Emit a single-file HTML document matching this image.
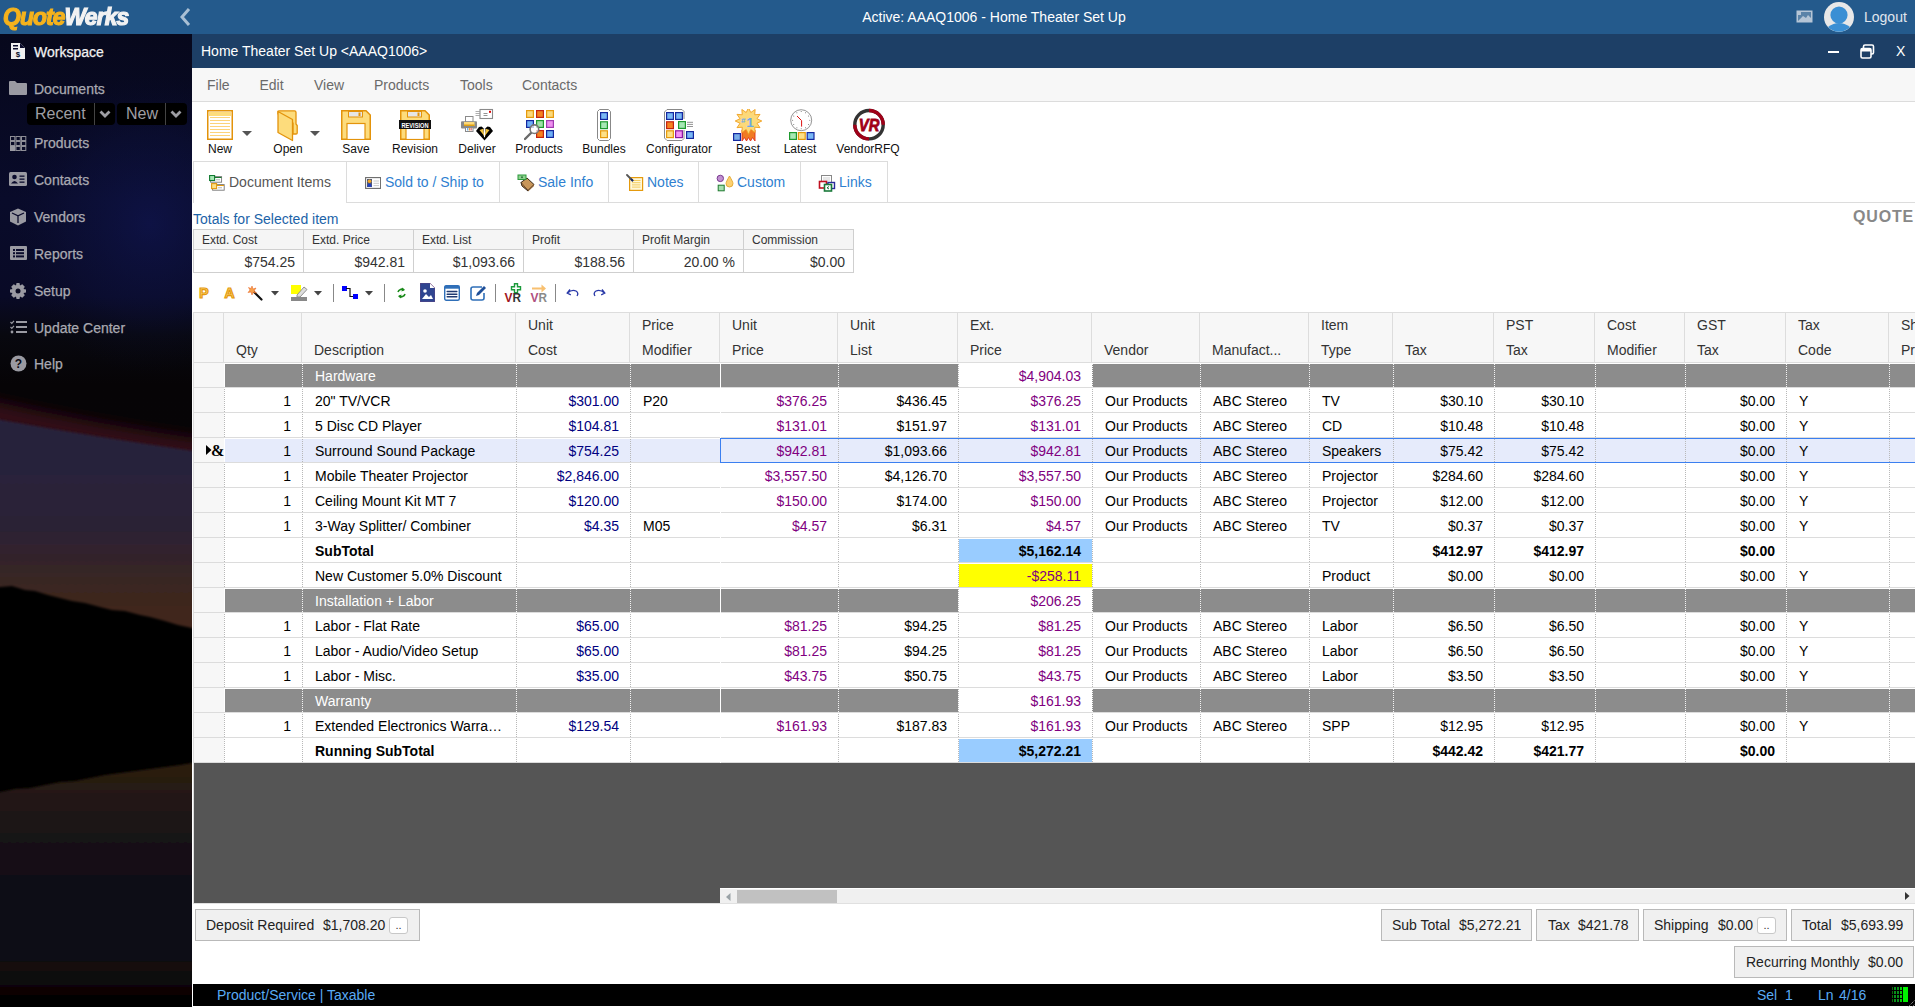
<!DOCTYPE html><html><head><meta charset="utf-8"><style>
*{box-sizing:border-box;margin:0;padding:0}
html,body{width:1915px;height:1007px;overflow:hidden;background:#fff;font-family:"Liberation Sans",sans-serif;}
.a{position:absolute}
.t{position:absolute;white-space:pre;line-height:1}
</style></head><body><div class="a" style="left:0px;top:0px;width:1915px;height:34px;background:#245a8c"></div><div class="t" style="left:2.5px;top:4.5px;font-size:24px;font-weight:700;font-style:italic;letter-spacing:-0.9px;transform:scaleX(0.95);transform-origin:0 0;-webkit-text-stroke:1.2px"><span style="color:#f5b21c;-webkit-text-stroke-color:#f5b21c">Quote</span><span style="color:#f2f2f2;-webkit-text-stroke-color:#f2f2f2">Werks</span></div><svg class="a" style="left:178px;top:7px" width="14" height="20"><path d="M11 2 L4 10 L11 18" fill="none" stroke="#a9bfd4" stroke-width="3"/></svg><div class="t" style="left:494px;width:1000px;text-align:center;top:10.15px;font-size:14px;color:#ffffff;font-weight:400;">Active: AAAQ1006 - Home Theater Set Up</div><svg class="a" style="left:1796px;top:10px" width="17" height="13"><rect x="0.5" y="0.5" width="16" height="12" fill="#b5c5d6"/><rect x="2" y="2" width="13" height="9" fill="#245a8c"/><rect x="2" y="2" width="13" height="9" fill="#c3d0dd" opacity="0.35"/><rect x="2" y="2" width="3" height="3" fill="#b5c5d6"/><path d="M2 11 L7 6 L10 8 L12 5 L15 8 L15 11Z" fill="#b5c5d6"/></svg><svg class="a" style="left:1823px;top:1px" width="32" height="32"><circle cx="16" cy="16" r="15" fill="#e8e8e8"/><circle cx="16" cy="14" r="8.6" fill="#3a8fd4"/><path d="M5 26 Q16 18 27 26 A15 15 0 0 1 5 26Z" fill="#3a8fd4"/></svg><div class="t" style="left:1864px;top:10.15px;font-size:14px;color:#e0e6ee;font-weight:400;">Logout</div><svg class="a" style="left:0;top:34px" width="192" height="973">
<defs>
<linearGradient id="sky1" x1="0" y1="0" x2="0" y2="973" gradientUnits="userSpaceOnUse">
<stop offset="0" stop-color="#07081c"/><stop offset="0.17" stop-color="#090b2a"/><stop offset="0.27" stop-color="#090a26"/><stop offset="0.31" stop-color="#08080f"/><stop offset="0.36" stop-color="#060406"/><stop offset="1" stop-color="#060508"/></linearGradient>
<linearGradient id="red" x1="0" y1="0" x2="0" y2="1"><stop offset="0" stop-color="#0a0507" stop-opacity="0"/><stop offset="0.55" stop-color="#2c0b0f"/><stop offset="1" stop-color="#2e1014"/></linearGradient>
<linearGradient id="sky2" x1="0" y1="380" x2="0" y2="600" gradientUnits="userSpaceOnUse"><stop offset="0" stop-color="#26223c"/><stop offset="0.3" stop-color="#29233a"/><stop offset="0.5" stop-color="#2b2236"/><stop offset="0.62" stop-color="#31242e"/><stop offset="0.8" stop-color="#3b2620"/><stop offset="1" stop-color="#45291a"/></linearGradient>
<linearGradient id="refl" x1="0" y1="715" x2="0" y2="973" gradientUnits="userSpaceOnUse"><stop offset="0" stop-color="#301e10"/><stop offset="0.15" stop-color="#261a12"/><stop offset="0.35" stop-color="#181218"/><stop offset="0.55" stop-color="#0f0d17"/><stop offset="0.75" stop-color="#0e0c16"/><stop offset="0.85" stop-color="#130c10"/><stop offset="0.92" stop-color="#090607"/><stop offset="1" stop-color="#030303"/></linearGradient>
<radialGradient id="glow"><stop offset="0" stop-color="#12185a" stop-opacity="0.55"/><stop offset="0.6" stop-color="#10164a" stop-opacity="0.25"/><stop offset="1" stop-color="#0a0d30" stop-opacity="0"/></radialGradient><filter id="bl" filterUnits="userSpaceOnUse" x="-50" y="250" width="300" height="300"><feGaussianBlur stdDeviation="7"/></filter>
<filter id="bl2" filterUnits="userSpaceOnUse" x="-50" y="300" width="300" height="700"><feGaussianBlur stdDeviation="1.2"/></filter>
</defs>
<rect x="0" y="0" width="192" height="973" fill="url(#sky1)"/><ellipse cx="150" cy="190" rx="140" ry="150" fill="url(#glow)"/><path d="M-20 250 Q60 300 100 330 Q150 355 212 380 L212 300 L-20 300Z" fill="#050510" opacity="0.0"/>
<path d="M-30 362 Q100 392 222 408 L222 470 L-30 470Z" fill="#300c12" filter="url(#bl)"/>
<path d="M-10 384 Q100 404 202 418 L202 620 L-10 620Z" fill="url(#sky2)" filter="url(#bl2)"/>
<path d="M-10 800 L-10 553 L0 553 L12 552 L25 556 L35 557 L48 561 L60 564 L72 567 L85 569 L100 573 L112 576 L125 577 L140 581 L150 583 L165 587 L178 591 L192 594 L205 598 L205 800Z" fill="#050304" filter="url(#bl2)"/>
<path d="M-10 760 L0 758 L15 755 L30 754 L45 751 L60 748 L75 747 L90 744 L105 741 L120 739 L135 737 L150 735 L165 733 L180 731 L192 729 L205 727 L205 990 L-10 990Z" fill="url(#refl)" filter="url(#bl2)"/>
</svg><svg class="a" style="left:11px;top:43px" width="14" height="16"><path d="M0 0 H9 L14 5 V16 H0Z" fill="#f0f0f0"/><path d="M9 0 V5 H14" fill="#0b0c2c"/><rect x="2" y="2" width="5" height="1.5" fill="#0b0c2c"/><rect x="2" y="5" width="5" height="1.5" fill="#0b0c2c"/><text x="7" y="14" font-size="8" font-family="Liberation Sans" font-weight="700" text-anchor="middle" fill="#0b0c2c">$</text></svg><div class="t" style="left:34px;top:45.15px;font-size:14px;color:#f2f2f2;font-weight:400;-webkit-text-stroke:0.25px">Workspace</div><svg class="a" style="left:9px;top:81px" width="18" height="14"><path d="M0 1 Q0 0 1 0 H6 L8 2 H17 Q18 2 18 3 V13 Q18 14 17 14 H1 Q0 14 0 13Z" fill="#9a9aa2"/></svg><div class="t" style="left:34px;top:82.15px;font-size:14px;color:#a9a9b1;font-weight:400;-webkit-text-stroke:0.25px">Documents</div><div class="a" style="left:27px;top:103px;width:88px;height:22px;background:#000;border-radius:4px"></div><div class="a" style="left:94px;top:103px;width:1px;height:22px;background:#444"></div><div class="t" style="left:35px;top:106.46px;font-size:16px;color:#9e9ea4;font-weight:400;">Recent</div><svg class="a" style="left:99px;top:110px" width="12" height="8"><path d="M1.5 1.5 L6 6 L10.5 1.5" fill="none" stroke="#9e9ea4" stroke-width="2.8"/></svg><div class="a" style="left:117px;top:103px;width:70px;height:22px;background:#000;border-radius:4px"></div><div class="a" style="left:165px;top:103px;width:1px;height:22px;background:#444"></div><div class="t" style="left:126px;top:106.46px;font-size:16px;color:#9e9ea4;font-weight:400;">New</div><svg class="a" style="left:170px;top:110px" width="12" height="8"><path d="M1.5 1.5 L6 6 L10.5 1.5" fill="none" stroke="#9e9ea4" stroke-width="2.8"/></svg><svg class="a" style="left:10px;top:136px" width="17" height="17"><rect x="0.5" y="0.5" width="4.3" height="4" fill="none" stroke="#8e8e96" stroke-width="1"/><rect x="6.0" y="0.5" width="4.3" height="4" fill="none" stroke="#8e8e96" stroke-width="1"/><rect x="11.5" y="0.5" width="4.3" height="4" fill="none" stroke="#8e8e96" stroke-width="1"/><rect x="0.5" y="5.5" width="4.3" height="4" fill="none" stroke="#8e8e96" stroke-width="1"/><rect x="6.0" y="5.5" width="4.3" height="4" fill="none" stroke="#8e8e96" stroke-width="1"/><rect x="11.5" y="5.5" width="4.3" height="4" fill="none" stroke="#8e8e96" stroke-width="1"/><rect x="0.5" y="10.5" width="4.3" height="4" fill="none" stroke="#8e8e96" stroke-width="1"/><rect x="6.0" y="10.5" width="4.3" height="4" fill="none" stroke="#8e8e96" stroke-width="1"/><rect x="11.5" y="10.5" width="4.3" height="4" fill="none" stroke="#8e8e96" stroke-width="1"/><rect x="0" y="10" width="5.3" height="5" fill="#9a9aa2"/></svg><div class="t" style="left:34px;top:136.15px;font-size:14px;color:#a9a9b1;font-weight:400;-webkit-text-stroke:0.25px">Products</div><svg class="a" style="left:9px;top:172px" width="18" height="15"><rect x="0" y="0" width="18" height="14" rx="1.5" fill="#9a9aa2"/><circle cx="5.5" cy="5" r="2.3" fill="#0b0c2c"/><path d="M2 11.5 Q5.5 6.5 9 11.5Z" fill="#0b0c2c"/><rect x="10.5" y="3.5" width="5" height="1.3" fill="#0b0c2c"/><rect x="10.5" y="6.5" width="5" height="1.3" fill="#0b0c2c"/><rect x="10.5" y="9.5" width="5" height="1.3" fill="#0b0c2c"/></svg><div class="t" style="left:34px;top:173.15px;font-size:14px;color:#a9a9b1;font-weight:400;-webkit-text-stroke:0.25px">Contacts</div><svg class="a" style="left:9px;top:208px" width="18" height="18"><path d="M9 0.5 L17 4 V13.5 L9 17.5 L1 13.5 V4Z" fill="#9a9aa2"/><path d="M3 5 L9 7.8 L15 5 M9 7.8 V15" fill="none" stroke="#0b0c2c" stroke-width="1.3"/></svg><div class="t" style="left:34px;top:210.15px;font-size:14px;color:#a9a9b1;font-weight:400;-webkit-text-stroke:0.25px">Vendors</div><svg class="a" style="left:10px;top:246px" width="17" height="14"><rect x="0" y="0" width="17" height="14" rx="1" fill="#9a9aa2"/><rect x="3" y="3" width="2" height="2" fill="#0b0c2c"/><rect x="6" y="3" width="8" height="2" fill="#0b0c2c"/><rect x="3" y="6.2" width="2" height="2" fill="#0b0c2c"/><rect x="6" y="6.2" width="8" height="2" fill="#0b0c2c"/><rect x="3" y="9.4" width="2" height="2" fill="#0b0c2c"/><rect x="6" y="9.4" width="8" height="2" fill="#0b0c2c"/></svg><div class="t" style="left:34px;top:247.15px;font-size:14px;color:#a9a9b1;font-weight:400;-webkit-text-stroke:0.25px">Reports</div><svg class="a" style="left:10px;top:283px" width="16" height="16"><g transform="translate(8 8)"><path d="M-1.5 -8 H1.5 L2 -5.5 L4.3 -6.8 L6.8 -4.3 L5.5 -2 L8 -1.5 V1.5 L5.5 2 L6.8 4.3 L4.3 6.8 L2 5.5 L1.5 8 H-1.5 L-2 5.5 L-4.3 6.8 L-6.8 4.3 L-5.5 2 L-8 1.5 V-1.5 L-5.5 -2 L-6.8 -4.3 L-4.3 -6.8 L-2 -5.5Z" fill="#9a9aa2"/><circle r="2.5" fill="#0b0b22"/></g></svg><div class="t" style="left:34px;top:284.15px;font-size:14px;color:#a9a9b1;font-weight:400;-webkit-text-stroke:0.25px">Setup</div><svg class="a" style="left:10px;top:320px" width="17" height="14"><path d="M0.5 2 L1.8 3.3 L4 0.8 M0.5 7 L1.8 8.3 L4 5.8" fill="none" stroke="#9a9aa2" stroke-width="1.2"/><circle cx="2" cy="12" r="1.4" fill="#9a9aa2"/><rect x="6" y="1" width="11" height="2" fill="#9a9aa2"/><rect x="6" y="6" width="11" height="2" fill="#9a9aa2"/><rect x="6" y="11" width="11" height="2" fill="#9a9aa2"/></svg><div class="t" style="left:34px;top:321.15px;font-size:14px;color:#a9a9b1;font-weight:400;-webkit-text-stroke:0.25px">Update Center</div><svg class="a" style="left:10px;top:355px" width="17" height="17"><circle cx="8.5" cy="8.5" r="8" fill="#9a9aa2"/><text x="8.5" y="13" font-size="12" font-weight="700" font-family="Liberation Sans" text-anchor="middle" fill="#0a0a14">?</text></svg><div class="t" style="left:34px;top:357.15px;font-size:14px;color:#a9a9b1;font-weight:400;-webkit-text-stroke:0.25px">Help</div><div class="a" style="left:192px;top:34px;width:1723px;height:34px;background:#1d3f66"></div><div class="t" style="left:201px;top:44.15px;font-size:14px;color:#ffffff;font-weight:400;">Home Theater Set Up &lt;AAAQ1006&gt;</div><div class="a" style="left:1828px;top:51px;width:11px;height:2px;background:#fff"></div><svg class="a" style="left:1860px;top:44px" width="15" height="15"><rect x="3.5" y="1" width="10" height="9" rx="1.5" fill="none" stroke="#fff" stroke-width="1.6"/><rect x="1" y="4.5" width="10" height="9.5" rx="1.5" fill="#1d3f66" stroke="#fff" stroke-width="1.6"/><rect x="1" y="4.5" width="10" height="3" fill="#fff"/></svg><div class="t" style="left:1896px;top:44.15px;font-size:14px;color:#ffffff;font-weight:400;">X</div><div class="a" style="left:192px;top:68px;width:1723px;height:33px;background:#f7f7f7"></div><div class="a" style="left:192px;top:101px;width:1723px;height:1px;background:#dcdcdc"></div><div class="t" style="left:207px;top:78.15px;font-size:14px;color:#6a6a6a;font-weight:400;">File</div><div class="t" style="left:259.5px;top:78.15px;font-size:14px;color:#6a6a6a;font-weight:400;">Edit</div><div class="t" style="left:314px;top:78.15px;font-size:14px;color:#6a6a6a;font-weight:400;">View</div><div class="t" style="left:374px;top:78.15px;font-size:14px;color:#6a6a6a;font-weight:400;">Products</div><div class="t" style="left:460px;top:78.15px;font-size:14px;color:#6a6a6a;font-weight:400;">Tools</div><div class="t" style="left:522px;top:78.15px;font-size:14px;color:#6a6a6a;font-weight:400;">Contacts</div><svg class="a" style="left:207px;top:110px" width="26" height="30" viewBox="0 0 26 30"><rect x="0.75" y="0.75" width="24.5" height="28.5" fill="#fff" stroke="#e3930b" stroke-width="1.5"/><rect x="2" y="2" width="22" height="4" fill="#fddc7c"/><rect x="3" y="7" width="20" height="1" fill="#fcd37a"/><rect x="3" y="10" width="20" height="1" fill="#fcd37a"/><rect x="3" y="13" width="20" height="1" fill="#fcd37a"/><rect x="3" y="16" width="20" height="1" fill="#fcd37a"/><rect x="3" y="19" width="20" height="1" fill="#fcd37a"/><rect x="3" y="22" width="20" height="1" fill="#fcd37a"/><rect x="3" y="25" width="20" height="1" fill="#fcd37a"/></svg><svg class="a" style="left:242px;top:131px" width="10" height="5" viewBox="0 0 10 5"><path d="M0 0 H10 L5 5Z" fill="#555"/></svg><div class="t" style="left:-280px;width:1000px;text-align:center;top:142.84px;font-size:12px;color:#111;font-weight:400;">New</div><svg class="a" style="left:277px;top:110px" width="21" height="32" viewBox="0 0 21 32"><path d="M1 2 Q1 0.8 2.5 0.8 H17.5 Q19 0.8 19 2.5 V14 L20.2 15.5 V23 Q20.2 24 19 24 H16 V13 L1 4Z" fill="#fddc7c" stroke="#e3930b" stroke-width="1.3"/><path d="M1 1.5 L15.5 9.5 V30.5 L1 22.5Z" fill="#fddc7c" stroke="#e3930b" stroke-width="1.3" stroke-linejoin="round"/></svg><svg class="a" style="left:310px;top:131px" width="10" height="5" viewBox="0 0 10 5"><path d="M0 0 H10 L5 5Z" fill="#555"/></svg><div class="t" style="left:-212px;width:1000px;text-align:center;top:142.84px;font-size:12px;color:#111;font-weight:400;">Open</div><svg class="a" style="left:341px;top:110px" width="30" height="30" viewBox="0 0 30 30"><path d="M0.75 0.75 H25 L29.25 5 V29.25 H0.75Z" fill="#fddc7c" stroke="#e3930b" stroke-width="1.5"/><rect x="7.5" y="1.5" width="14" height="5.5" fill="#e6e6e6" stroke="#e3930b" stroke-width="1"/><rect x="17.5" y="2.5" width="2" height="3.5" fill="#e3930b"/><rect x="6" y="13.5" width="18" height="16" fill="#fff" stroke="#e3930b" stroke-width="1.2"/></svg><div class="t" style="left:-144px;width:1000px;text-align:center;top:142.84px;font-size:12px;color:#111;font-weight:400;">Save</div><svg class="a" style="left:400px;top:110px" width="30" height="30" viewBox="0 0 30 30"><path d="M0.75 0.75 H25 L29.25 5 V29.25 H0.75Z" fill="#fddc7c" stroke="#e3930b" stroke-width="1.5"/><rect x="7.5" y="1.5" width="14" height="5.5" fill="#e6e6e6" stroke="#e3930b" stroke-width="1"/><rect x="17.5" y="2.5" width="2" height="3.5" fill="#e3930b"/><rect x="6" y="13.5" width="18" height="16" fill="#fff" stroke="#e3930b" stroke-width="1.2"/></svg><svg class="a" style="left:399px;top:120px" width="32" height="9" viewBox="0 0 32 9"><rect x="0" y="0" width="32" height="9" fill="#111"/><text x="2.5" y="7.6" font-family="Liberation Sans" font-weight="700" font-size="8" fill="#fff" textLength="27" lengthAdjust="spacingAndGlyphs">REVISION</text></svg><div class="t" style="left:-85px;width:1000px;text-align:center;top:142.84px;font-size:12px;color:#111;font-weight:400;">Revision</div><svg class="a" style="left:460px;top:108px" width="34" height="34" viewBox="0 0 34 34">
<rect x="20" y="1.5" width="12.5" height="9" fill="#fff" stroke="#8a8a8a" stroke-width="1.1"/><path d="M23.5 5.5 H27.5 M23.5 7.5 H27.5" stroke="#888" stroke-width="0.9"/><rect x="29" y="2.8" width="2" height="2" fill="#d00"/>
<path d="M15.5 3.5 H20 M15.5 5.5 H20 M15.5 7.5 H20" stroke="#999" stroke-width="0.8"/>
<rect x="5.5" y="8.5" width="7.5" height="5.5" fill="#fff" stroke="#8a8a8a" stroke-width="1"/>
<rect x="1" y="13.2" width="16" height="7.4" rx="1" fill="#8a8a8a"/><rect x="4" y="14" width="10.5" height="4" fill="#fcd97a"/><rect x="4" y="16.5" width="10.5" height="1.5" fill="#e0a010"/>
<rect x="5.5" y="19.5" width="7.5" height="4" fill="#fff" stroke="#8a8a8a" stroke-width="1"/><rect x="7" y="20" width="1.3" height="2.5" fill="#6ab0f0"/><rect x="8.8" y="20" width="1.3" height="2.5" fill="#f0a030"/><rect x="10.5" y="20" width="1.3" height="2.5" fill="#e07070"/>
<path d="M16 23 L19 19 L21.5 18.5 L24.5 21 L27.5 18.5 L30 19 L33 23 L24.5 32.5Z" fill="#000"/><path d="M19.5 22 L23.2 20.8 L24.5 29 L25.8 20.8 L29.5 22 L25.5 27 L24.5 30 L23.5 27Z" fill="#f3c440"/><path d="M23.6 20.5 H25.4 L25 29 H24Z" fill="#fff"/>
</svg><div class="t" style="left:-23px;width:1000px;text-align:center;top:142.84px;font-size:12px;color:#111;font-weight:400;">Deliver</div><svg class="a" style="left:524px;top:110px" width="32" height="32" viewBox="0 0 32 32"><g transform="translate(2 0)"><rect x="0.6" y="0.6" width="6.8" height="6.8" fill="#fcd97a" stroke="#e59a0d" stroke-width="1.2"/><rect x="10.6" y="0.6" width="6.8" height="6.8" fill="#f5821f" stroke="#c4230f" stroke-width="1.2"/><rect x="20.6" y="0.6" width="6.8" height="6.8" fill="#fcd97a" stroke="#e59a0d" stroke-width="1.2"/><rect x="0.6" y="10.6" width="6.8" height="6.8" fill="#6fb0f5" stroke="#1428a0" stroke-width="1.2"/><rect x="10.6" y="10.6" width="6.8" height="6.8" fill="#9fe0a8" stroke="#1f9a2f" stroke-width="1.2"/><rect x="20.6" y="10.6" width="6.8" height="6.8" fill="#ef8ff0" stroke="#a03cb0" stroke-width="1.2"/><rect x="10.6" y="20.6" width="6.8" height="6.8" fill="#f5821f" stroke="#c4230f" stroke-width="1.2"/><rect x="20.6" y="20.6" width="6.8" height="6.8" fill="#6fb0f5" stroke="#1428a0" stroke-width="1.2"/><path d="M5 23 L-1 29" stroke="#6a6a6a" stroke-width="2.4" stroke-linecap="round"/><circle cx="8.4" cy="19.2" r="4.3" fill="#fff" fill-opacity="0.75" stroke="#777" stroke-width="1.6"/></g></svg><div class="t" style="left:39px;width:1000px;text-align:center;top:142.84px;font-size:12px;color:#111;font-weight:400;">Products</div><svg class="a" style="left:597px;top:109px" width="15" height="32" viewBox="0 0 15 32"><path d="M2.5 0.5 H11.5 L13.5 2.5 V29.5 L11.5 31.5 H2.5 L0.5 29.5 V2.5Z" fill="#fff" stroke="#888" stroke-width="1"/><rect x="3.6" y="3.6" width="6.8" height="6.8" fill="#7ab8f5" stroke="#1428a0" stroke-width="1.2"/><rect x="3.6" y="12.799999999999999" width="6.8" height="6.8" fill="#a6e8b4" stroke="#1f9a2f" stroke-width="1.2"/><rect x="3.6" y="21.8" width="6.8" height="6.8" fill="#fde088" stroke="#e59a0d" stroke-width="1.2"/></svg><div class="t" style="left:104px;width:1000px;text-align:center;top:142.84px;font-size:12px;color:#111;font-weight:400;">Bundles</div><svg class="a" style="left:664px;top:109px" width="31" height="32" viewBox="0 0 31 32"><path d="M20 10 V2.5 L18 0.5 H3 L0.5 3 V29 L3 31.5 H18 L20 29.5 V21" fill="#fff" stroke="#888" stroke-width="1"/><rect x="2.6" y="3.6" width="6.8" height="6.8" fill="#7ab8f5" stroke="#1428a0" stroke-width="1.2"/><rect x="11.6" y="3.6" width="6.8" height="6.8" fill="#7ab8f5" stroke="#1428a0" stroke-width="1.2"/><rect x="2.6" y="12.799999999999999" width="6.8" height="6.8" fill="#f5821f" stroke="#c4230f" stroke-width="1.2"/><rect x="14.6" y="12.6" width="6.8" height="6.8" fill="#a6e8b4" stroke="#1f9a2f" stroke-width="1.2"/><rect x="2.6" y="21.8" width="6.8" height="6.8" fill="#fde088" stroke="#e59a0d" stroke-width="1.2"/><rect x="11.6" y="21.8" width="6.8" height="6.8" fill="#f590f5" stroke="#8a1aa0" stroke-width="1.2"/><rect x="22.6" y="22.6" width="6.8" height="6.8" fill="#7ab8f5" stroke="#1428a0" stroke-width="1.2"/><path d="M23 13.3 H29 M23 15.4 H29 M23 17.5 H29" stroke="#888" stroke-width="0.9"/></svg><div class="t" style="left:179px;width:1000px;text-align:center;top:142.84px;font-size:12px;color:#111;font-weight:400;">Configurator</div><svg class="a" style="left:733px;top:109px" width="30" height="33" viewBox="0 0 30 33"><path d="M9 21 L9 32 L11.5 28.5 L13.5 32 L15.5 28.5 L17.5 32 L19.5 28.5 L22 32 L22 21Z" fill="#f07b22" stroke="#e0301a" stroke-width="0.9"/><polygon points="15.50,-1.30 17.78,3.50 22.15,0.48 21.72,5.78 27.02,5.35 24.00,9.72 28.80,12.00 24.00,14.28 27.02,18.65 21.72,18.22 22.15,23.52 17.78,20.50 15.50,25.30 13.22,20.50 8.85,23.52 9.28,18.22 3.98,18.65 7.00,14.28 2.20,12.00 7.00,9.72 3.98,5.35 9.28,5.78 8.85,0.48 13.22,3.50" fill="#fcd97a" stroke="#f0a020" stroke-width="0.9"/><text x="17" y="18" font-family="Liberation Sans" font-weight="700" font-size="13.5" fill="#6aa8e8" text-anchor="middle">1</text><text x="10.2" y="14" font-family="Liberation Sans" font-weight="700" font-size="8" fill="#6aa8e8" text-anchor="middle">#</text><rect x="0.6" y="24.6" width="6.8" height="6.8" fill="#7aaee8" stroke="#1428a0" stroke-width="1.2"/></svg><div class="t" style="left:248px;width:1000px;text-align:center;top:142.84px;font-size:12px;color:#111;font-weight:400;">Best</div><svg class="a" style="left:789px;top:109px" width="26" height="32" viewBox="0 0 26 32"><circle cx="12.2" cy="11.2" r="10.5" fill="#fff" stroke="#888" stroke-width="0.9"/><circle cx="12.20" cy="2.60" r="0.5" fill="#666"/><circle cx="16.50" cy="3.75" r="0.5" fill="#666"/><circle cx="19.65" cy="6.90" r="0.5" fill="#666"/><circle cx="20.80" cy="11.20" r="0.5" fill="#666"/><circle cx="19.65" cy="15.50" r="0.5" fill="#666"/><circle cx="16.50" cy="18.65" r="0.5" fill="#666"/><circle cx="12.20" cy="19.80" r="0.5" fill="#666"/><circle cx="7.90" cy="18.65" r="0.5" fill="#666"/><circle cx="4.75" cy="15.50" r="0.5" fill="#666"/><circle cx="3.60" cy="11.20" r="0.5" fill="#666"/><circle cx="4.75" cy="6.90" r="0.5" fill="#666"/><circle cx="7.90" cy="3.75" r="0.5" fill="#666"/><path d="M8 7 L12.6 11.6 V17.6" fill="none" stroke="#d11" stroke-width="1"/><rect x="0.6" y="23.6" width="6.8" height="6.8" fill="#a6e8b4" stroke="#1f9a2f" stroke-width="1.2"/><rect x="9.4" y="23.6" width="6.8" height="6.8" fill="#fde088" stroke="#e59a0d" stroke-width="1.2"/><rect x="18.200000000000003" y="23.6" width="6.8" height="6.8" fill="#7ab8f5" stroke="#1428a0" stroke-width="1.2"/></svg><div class="t" style="left:300px;width:1000px;text-align:center;top:142.84px;font-size:12px;color:#111;font-weight:400;">Latest</div><svg class="a" style="left:853px;top:108px" width="33" height="34" viewBox="0 0 33 34"><circle cx="16" cy="16.7" r="14.2" fill="#fff" stroke="#333" stroke-width="3.4"/><path d="M16 2.5 A14.2 14.2 0 0 1 30.2 16.7" fill="none" stroke="#a00018" stroke-width="3.4"/><path d="M1.8 16.7 A14.2 14.2 0 0 0 16 30.9" fill="none" stroke="#a00018" stroke-width="3.4"/><text x="5.8" y="22.8" font-family="Liberation Sans" font-weight="700" font-style="italic" font-size="17" fill="#a00018" stroke="#a00018" stroke-width="0.8" textLength="20.5" lengthAdjust="spacingAndGlyphs">VR</text></svg><div class="t" style="left:368px;width:1000px;text-align:center;top:142.84px;font-size:12px;color:#111;font-weight:400;">VendorRFQ</div><div class="a" style="left:193px;top:161px;width:694px;height:1px;background:#dcdcdc"></div><div class="a" style="left:193px;top:202px;width:1722px;height:1px;background:#dcdcdc"></div><div class="a" style="left:194px;top:162px;width:152px;height:41px;background:#fff"></div><div class="a" style="left:193px;top:161px;width:1px;height:42px;background:#dcdcdc"></div><div class="a" style="left:346px;top:161px;width:1px;height:42px;background:#dcdcdc"></div><div class="a" style="left:499px;top:161px;width:1px;height:42px;background:#dcdcdc"></div><div class="a" style="left:608px;top:161px;width:1px;height:42px;background:#dcdcdc"></div><div class="a" style="left:698px;top:161px;width:1px;height:42px;background:#dcdcdc"></div><div class="a" style="left:800px;top:161px;width:1px;height:42px;background:#dcdcdc"></div><div class="a" style="left:887px;top:161px;width:1px;height:42px;background:#dcdcdc"></div><div class="t" style="left:229px;top:175.15px;font-size:14px;color:#555555;font-weight:400;">Document Items</div><div class="t" style="left:385px;top:175.15px;font-size:14px;color:#2f7fd0;font-weight:400;">Sold to / Ship to</div><div class="t" style="left:538px;top:175.15px;font-size:14px;color:#2f7fd0;font-weight:400;">Sale Info</div><div class="t" style="left:647px;top:175.15px;font-size:14px;color:#2f7fd0;font-weight:400;">Notes</div><div class="t" style="left:737px;top:175.15px;font-size:14px;color:#2f7fd0;font-weight:400;">Custom</div><div class="t" style="left:839px;top:175.15px;font-size:14px;color:#2f7fd0;font-weight:400;">Links</div><svg class="a" style="left:209px;top:175px" width="17" height="17" viewBox="0 0 17 17"><rect x="1.6" y="1.6" width="11" height="5.6" fill="#fff" stroke="#777" stroke-width="0.9"/><rect x="5" y="2" width="7.5" height="1" fill="#1a7a30"/><circle cx="8" cy="4.8" r="0.55" fill="#555"/><circle cx="10" cy="4.8" r="0.55" fill="#555"/><rect x="0.6" y="0.5" width="5" height="5" fill="#a6e8b4" stroke="#107a30" stroke-width="1.1"/><rect x="3.6" y="9.6" width="11.6" height="5.6" fill="#fff" stroke="#777" stroke-width="0.9"/><rect x="7" y="10" width="8" height="1" fill="#e39a10"/><circle cx="10" cy="12.8" r="0.55" fill="#555"/><circle cx="12" cy="12.8" r="0.55" fill="#555"/><rect x="2.6" y="8.6" width="5" height="5" fill="#fde088" stroke="#e39a10" stroke-width="1.1"/></svg><svg class="a" style="left:365px;top:177px" width="16" height="12" viewBox="0 0 16 12"><rect x="0.6" y="0.6" width="15" height="10.8" fill="#fff" stroke="#6a6a6a" stroke-width="1.1"/><rect x="2" y="2" width="5" height="8" fill="#555a70"/><circle cx="4.5" cy="4.3" r="1.8" fill="#f5a623"/><path d="M2.2 9.8 L3 6.8 H6 L6.8 9.8Z" fill="#2040c0"/><path d="M8.5 4 H14 M8.5 6.3 H14 M8.5 8.6 H14" stroke="#bbb" stroke-width="0.8"/></svg><svg class="a" style="left:517px;top:174px" width="18" height="18" viewBox="0 0 18 18"><path d="M4 8.5 L10 4 L17 10.5 L11 16.5Z" fill="#c8965a" stroke="#3a2a1a" stroke-width="1" stroke-linejoin="round"/><path d="M4 8.5 L5 12 L11 17 L11 16.5" fill="#b07a40" stroke="#3a2a1a" stroke-width="1" stroke-linejoin="round"/><path d="M11 16.5 L17 10.5 V12 L11 17.5Z" fill="#8a5a2a"/><rect x="1" y="1" width="8" height="4.5" fill="#8fd08f" stroke="#2a9a3a" stroke-width="1"/><circle cx="5" cy="3.2" r="1" fill="#2a7a3a"/></svg><svg class="a" style="left:626px;top:174px" width="18" height="18" viewBox="0 0 18 18"><rect x="3.6" y="3.6" width="13" height="12.8" fill="#fff8d8" stroke="#e59a0d" stroke-width="1.2"/><path d="M6 6.5 H14.5 M6 8.7 H14.5 M6 10.9 H14.5 M6 13.1 H14.5" stroke="#f0c040" stroke-width="0.8"/><path d="M1 1 L6.5 6.5" stroke="#555" stroke-width="1.8" stroke-linecap="round"/><path d="M5 5 L7 7" stroke="#1a2a6a" stroke-width="2"/></svg><svg class="a" style="left:716px;top:174px" width="18" height="18" viewBox="0 0 18 18"><circle cx="4.3" cy="4.4" r="3.2" fill="#c090d0" stroke="#7a3a90" stroke-width="1"/><rect x="2.2" y="11.2" width="6" height="5.6" fill="#a6e0b0" stroke="#1f7a2f" stroke-width="1"/><path d="M13.5 2 Q17 8 17 9.5 A3.5 3.5 0 0 1 10 9.5 Q10 8 13.5 2Z" fill="#fcd070" stroke="#e0a020" stroke-width="0.8"/></svg><svg class="a" style="left:818px;top:174px" width="18" height="18" viewBox="0 0 18 18"><rect x="3.5" y="1.5" width="10" height="8" fill="#fff" stroke="#888" stroke-width="1"/><path d="M5 4 H12 M5 6 H12" stroke="#bbb" stroke-width="0.7"/><rect x="1.5" y="7.5" width="7" height="6.5" fill="#fff" stroke="#c01020" stroke-width="1.6"/><rect x="10" y="8.5" width="6.5" height="6" fill="#fff" stroke="#2a2a9a" stroke-width="1.4"/><rect x="6.5" y="10.5" width="7" height="6.5" fill="#fff" stroke="#1a7a3a" stroke-width="1.6"/><path d="M11 12.5 L9 13.8 L11 15" fill="none" stroke="#1a7a3a" stroke-width="1"/></svg><div class="t" style="right:1px;top:209.46px;font-size:16px;color:#888888;font-weight:700;text-align:right;letter-spacing:0.8px">QUOTE</div><div class="t" style="left:193px;top:212.15px;font-size:14px;color:#1c63a8;font-weight:400;">Totals for Selected item</div><div class="a" style="left:193px;top:229px;width:661px;height:44px;background:#fff;border:1px solid #cfcfcf"></div><div class="a" style="left:194px;top:230px;width:659px;height:19px;background:#f5f5f5"></div><div class="a" style="left:193px;top:249px;width:661px;height:1px;background:#cfcfcf"></div><div class="t" style="left:202px;top:233.84px;font-size:12px;color:#333333;font-weight:400;">Extd. Cost</div><div class="t" style="right:1620px;top:255.15px;font-size:14px;color:#333333;font-weight:400;text-align:right;">$754.25</div><div class="a" style="left:303px;top:229px;width:1px;height:44px;background:#cfcfcf"></div><div class="t" style="left:312px;top:233.84px;font-size:12px;color:#333333;font-weight:400;">Extd. Price</div><div class="t" style="right:1510px;top:255.15px;font-size:14px;color:#333333;font-weight:400;text-align:right;">$942.81</div><div class="a" style="left:413px;top:229px;width:1px;height:44px;background:#cfcfcf"></div><div class="t" style="left:422px;top:233.84px;font-size:12px;color:#333333;font-weight:400;">Extd. List</div><div class="t" style="right:1400px;top:255.15px;font-size:14px;color:#333333;font-weight:400;text-align:right;">$1,093.66</div><div class="a" style="left:523px;top:229px;width:1px;height:44px;background:#cfcfcf"></div><div class="t" style="left:532px;top:233.84px;font-size:12px;color:#333333;font-weight:400;">Profit</div><div class="t" style="right:1290px;top:255.15px;font-size:14px;color:#333333;font-weight:400;text-align:right;">$188.56</div><div class="a" style="left:633px;top:229px;width:1px;height:44px;background:#cfcfcf"></div><div class="t" style="left:642px;top:233.84px;font-size:12px;color:#333333;font-weight:400;">Profit Margin</div><div class="t" style="right:1180px;top:255.15px;font-size:14px;color:#333333;font-weight:400;text-align:right;">20.00 %</div><div class="a" style="left:743px;top:229px;width:1px;height:44px;background:#cfcfcf"></div><div class="t" style="left:752px;top:233.84px;font-size:12px;color:#333333;font-weight:400;">Commission</div><div class="t" style="right:1070px;top:255.15px;font-size:14px;color:#333333;font-weight:400;text-align:right;">$0.00</div><svg class="a" style="left:198px;top:286px" width="12" height="13" viewBox="0 0 12 13"><text x="6" y="12" font-family="Liberation Sans" font-weight="700" font-size="14" fill="#fcd97a" stroke="#e59a0d" stroke-width="1.2" text-anchor="middle">P</text></svg><svg class="a" style="left:223px;top:286px" width="13" height="13" viewBox="0 0 13 13"><text x="6.5" y="12" font-family="Liberation Sans" font-weight="700" font-size="14" fill="#fcd97a" stroke="#e59a0d" stroke-width="1.2" text-anchor="middle">A</text></svg><svg class="a" style="left:247px;top:285px" width="16" height="16" viewBox="0 0 16 16"><path d="M6 6 L14.5 14.5" stroke="#111" stroke-width="2.2" stroke-linecap="round"/><path d="M5 1 L6 4 L9 3 L7 6 L9.5 8 L6 7.5 L5 10 L4 7 L1 7.5 L3 5 L1.5 2.5 L4 3.5Z" fill="#f7a04a" stroke="#e65c1a" stroke-width="0.5"/></svg><svg class="a" style="left:271px;top:291px" width="8" height="5" viewBox="0 0 8 5"><path d="M0 0 H8 L4 4.5Z" fill="#444"/></svg><svg class="a" style="left:291px;top:285px" width="17" height="16" viewBox="0 0 17 16"><rect x="0" y="0" width="10" height="9" fill="#ffff00"/><path d="M6 10 L13 2 L16 4.5 L9 12 H6Z" fill="#ddd" stroke="#888" stroke-width="0.9"/><rect x="0" y="12" width="16" height="4" fill="#888"/></svg><svg class="a" style="left:314px;top:291px" width="8" height="5" viewBox="0 0 8 5"><path d="M0 0 H8 L4 4.5Z" fill="#444"/></svg><div class="a" style="left:333px;top:284px;width:1px;height:18px;background:#888"></div><svg class="a" style="left:342px;top:286px" width="17" height="13" viewBox="0 0 17 13"><rect x="0" y="0" width="5" height="5" fill="#0000ff"/><path d="M4 2.5 H8 V10.5 H12" fill="none" stroke="#111" stroke-width="1.2"/><rect x="11" y="8" width="5" height="5" fill="#0000ff"/></svg><svg class="a" style="left:365px;top:291px" width="8" height="5" viewBox="0 0 8 5"><path d="M0 0 H8 L4 4.5Z" fill="#444"/></svg><div class="a" style="left:384px;top:284px;width:1px;height:18px;background:#888"></div><svg class="a" style="left:396px;top:287px" width="11" height="12" viewBox="0 0 11 12"><path d="M2 5 A3.8 3.8 0 0 1 8 3" fill="none" stroke="#1a8a1a" stroke-width="1.6"/><path d="M6 0.5 L9 3 L5.5 4.5Z" fill="#1a8a1a"/><path d="M9 7 A3.8 3.8 0 0 1 3 9" fill="none" stroke="#1a8a1a" stroke-width="1.6"/><path d="M5 11.5 L2 9 L5.5 7.5Z" fill="#1a8a1a"/></svg><svg class="a" style="left:420px;top:283px" width="15" height="19" viewBox="0 0 15 19"><path d="M0 0 H10 L15 5 V19 H0Z" fill="#2f4590"/><path d="M10 0.5 L14.5 5 H10Z" fill="#fff"/><path d="M11 0 L15 4 V0Z" fill="#fff" opacity="0"/><path d="M2 16 L6 11 L9 14 L11 12 L13 16Z" fill="#fff"/><circle cx="5" cy="8" r="1.8" fill="#fff"/><path d="M0 0 H10 L15 5 V19 H0Z" fill="none" stroke="#c04a6a" stroke-width="0.5" opacity="0.6"/></svg><svg class="a" style="left:444px;top:285px" width="16" height="16" viewBox="0 0 16 16"><rect x="0.7" y="0.7" width="14.6" height="14.6" rx="1.5" fill="#fff" stroke="#2f6fb8" stroke-width="1.4"/><rect x="0.7" y="0.7" width="14.6" height="3" fill="#2f6fb8"/><path d="M3.2 6.6 H12.8 M3.2 9.2 H12.8 M3.2 11.8 H12.8" stroke="#203a70" stroke-width="1.5" stroke-linecap="round"/></svg><svg class="a" style="left:470px;top:285px" width="16" height="16" viewBox="0 0 16 16"><path d="M12 2 H3 Q1 2 1 4 V13 Q1 15 3 15 H12 Q14 15 14 13 V8" fill="none" stroke="#2f6fb8" stroke-width="1.6"/><path d="M6 11 L7 8 L14 1 L16 3 L9 10Z" fill="#1f4f98"/></svg><div class="a" style="left:495px;top:284px;width:1px;height:18px;background:#888"></div><svg class="a" style="left:504px;top:283px" width="18" height="19" viewBox="0 0 18 19"><path d="M10.5 0.7 H13.5 V3.7 H16.5 V6.7 H13.5 V9.7 H10.5 V6.7 H7.5 V3.7 H10.5Z" fill="#fff" stroke="#1a9a3a" stroke-width="1.4"/><text x="0.5" y="18.5" font-family="Liberation Sans" font-weight="700" font-size="12" fill="#a01522" textLength="8" lengthAdjust="spacingAndGlyphs">V</text><text x="8.5" y="18.5" font-family="Liberation Sans" font-weight="700" font-size="12" fill="#333" textLength="8.5" lengthAdjust="spacingAndGlyphs">R</text></svg><svg class="a" style="left:530px;top:283px" width="18" height="19" viewBox="0 0 18 19"><path d="M2 4.5 H11.5 V1.5 L16 5.5 L11.5 9.5 V6.5 H2Z" fill="#f8c070"/><text x="0.5" y="18.5" font-family="Liberation Sans" font-weight="700" font-size="12" fill="#b05080" textLength="8" lengthAdjust="spacingAndGlyphs">V</text><text x="8.5" y="18.5" font-family="Liberation Sans" font-weight="700" font-size="12" fill="#8a8a8a" textLength="8.5" lengthAdjust="spacingAndGlyphs">R</text></svg><div class="a" style="left:555px;top:284px;width:1px;height:18px;background:#888"></div><svg class="a" style="left:566px;top:288px" width="14" height="9" viewBox="0 0 14 9"><path d="M4 1.5 L1.2 5 L4.8 6.8 M1.5 5 Q6 1 10 3 Q13 5 11 8" fill="none" stroke="#2a3aa8" stroke-width="1.3"/></svg><svg class="a" style="left:592px;top:288px" width="14" height="9" viewBox="0 0 14 9"><path d="M10 1.5 L12.8 5 L9.2 6.8 M12.5 5 Q8 1 4 3 Q1 5 3 8" fill="none" stroke="#2a3aa8" stroke-width="1.3"/></svg><div class="a" style="left:193px;top:312px;width:1722px;height:51px;background:#f7f7f7"></div><div class="a" style="left:193px;top:312px;width:1722px;height:1px;background:#dddddd"></div><div class="a" style="left:193px;top:362px;width:1722px;height:1px;background:#dddddd"></div><div class="a" style="left:193px;top:312px;width:1px;height:50px;background:#dddddd"></div><div class="a" style="left:223px;top:312px;width:1px;height:50px;background:#dddddd"></div><div class="a" style="left:301px;top:312px;width:1px;height:50px;background:#dddddd"></div><div class="a" style="left:515px;top:312px;width:1px;height:50px;background:#dddddd"></div><div class="a" style="left:629px;top:312px;width:1px;height:50px;background:#dddddd"></div><div class="a" style="left:719px;top:312px;width:1px;height:50px;background:#dddddd"></div><div class="a" style="left:837px;top:312px;width:1px;height:50px;background:#dddddd"></div><div class="a" style="left:957px;top:312px;width:1px;height:50px;background:#dddddd"></div><div class="a" style="left:1091px;top:312px;width:1px;height:50px;background:#dddddd"></div><div class="a" style="left:1199px;top:312px;width:1px;height:50px;background:#dddddd"></div><div class="a" style="left:1308px;top:312px;width:1px;height:50px;background:#dddddd"></div><div class="a" style="left:1392px;top:312px;width:1px;height:50px;background:#dddddd"></div><div class="a" style="left:1493px;top:312px;width:1px;height:50px;background:#dddddd"></div><div class="a" style="left:1594px;top:312px;width:1px;height:50px;background:#dddddd"></div><div class="a" style="left:1684px;top:312px;width:1px;height:50px;background:#dddddd"></div><div class="a" style="left:1785px;top:312px;width:1px;height:50px;background:#dddddd"></div><div class="a" style="left:1888px;top:312px;width:1px;height:50px;background:#dddddd"></div><div class="t" style="left:236px;top:343.15px;font-size:14px;color:#333333;font-weight:400;">Qty</div><div class="t" style="left:314px;top:343.15px;font-size:14px;color:#333333;font-weight:400;">Description</div><div class="t" style="left:528px;top:318.15px;font-size:14px;color:#333333;font-weight:400;">Unit</div><div class="t" style="left:528px;top:343.15px;font-size:14px;color:#333333;font-weight:400;">Cost</div><div class="t" style="left:642px;top:318.15px;font-size:14px;color:#333333;font-weight:400;">Price</div><div class="t" style="left:642px;top:343.15px;font-size:14px;color:#333333;font-weight:400;">Modifier</div><div class="t" style="left:732px;top:318.15px;font-size:14px;color:#333333;font-weight:400;">Unit</div><div class="t" style="left:732px;top:343.15px;font-size:14px;color:#333333;font-weight:400;">Price</div><div class="t" style="left:850px;top:318.15px;font-size:14px;color:#333333;font-weight:400;">Unit</div><div class="t" style="left:850px;top:343.15px;font-size:14px;color:#333333;font-weight:400;">List</div><div class="t" style="left:970px;top:318.15px;font-size:14px;color:#333333;font-weight:400;">Ext.</div><div class="t" style="left:970px;top:343.15px;font-size:14px;color:#333333;font-weight:400;">Price</div><div class="t" style="left:1104px;top:343.15px;font-size:14px;color:#333333;font-weight:400;">Vendor</div><div class="t" style="left:1212px;top:343.15px;font-size:14px;color:#333333;font-weight:400;">Manufact...</div><div class="t" style="left:1321px;top:318.15px;font-size:14px;color:#333333;font-weight:400;">Item</div><div class="t" style="left:1321px;top:343.15px;font-size:14px;color:#333333;font-weight:400;">Type</div><div class="t" style="left:1405px;top:343.15px;font-size:14px;color:#333333;font-weight:400;">Tax</div><div class="t" style="left:1506px;top:318.15px;font-size:14px;color:#333333;font-weight:400;">PST</div><div class="t" style="left:1506px;top:343.15px;font-size:14px;color:#333333;font-weight:400;">Tax</div><div class="t" style="left:1607px;top:318.15px;font-size:14px;color:#333333;font-weight:400;">Cost</div><div class="t" style="left:1607px;top:343.15px;font-size:14px;color:#333333;font-weight:400;">Modifier</div><div class="t" style="left:1697px;top:318.15px;font-size:14px;color:#333333;font-weight:400;">GST</div><div class="t" style="left:1697px;top:343.15px;font-size:14px;color:#333333;font-weight:400;">Tax</div><div class="t" style="left:1798px;top:318.15px;font-size:14px;color:#333333;font-weight:400;">Tax</div><div class="t" style="left:1798px;top:343.15px;font-size:14px;color:#333333;font-weight:400;">Code</div><div class="t" style="left:1901px;top:318.15px;font-size:14px;color:#333333;font-weight:400;">Sh</div><div class="t" style="left:1901px;top:343.15px;font-size:14px;color:#333333;font-weight:400;">Pr</div><div class="a" style="left:193px;top:363px;width:1722px;height:400px;background:#fff"></div><div class="a" style="left:194px;top:363px;width:30px;height:400px;background:#f7f7f7"></div><div class="a" style="left:193px;top:363px;width:1px;height:400px;background:#dddddd"></div><div class="a" style="left:225px;top:364px;width:495px;height:23px;background:#8c8c8c"></div><div class="a" style="left:721px;top:364px;width:237px;height:23px;background:#8c8c8c"></div><div class="a" style="left:1092px;top:364px;width:823px;height:23px;background:#8c8c8c"></div><div class="t" style="left:315px;top:369.15px;font-size:14px;color:#ffffff;font-weight:400;">Hardware</div><div class="t" style="right:834px;top:369.15px;font-size:14px;color:#800080;font-weight:400;text-align:right;">$4,904.03</div><div class="a" style="left:193px;top:387px;width:527px;height:1px;background:#dcdcdc"></div><div class="a" style="left:721px;top:387px;width:1194px;height:1px;background:#dcdcdc"></div><div class="t" style="right:1624px;top:394.15px;font-size:14px;color:#000000;font-weight:400;text-align:right;">1</div><div class="t" style="left:315px;top:394.15px;font-size:14px;color:#000000;font-weight:400;">20&quot; TV/VCR</div><div class="t" style="right:1296px;top:394.15px;font-size:14px;color:#000080;font-weight:400;text-align:right;">$301.00</div><div class="t" style="left:643px;top:394.15px;font-size:14px;color:#000000;font-weight:400;">P20</div><div class="t" style="right:1088px;top:394.15px;font-size:14px;color:#800080;font-weight:400;text-align:right;">$376.25</div><div class="t" style="right:968px;top:394.15px;font-size:14px;color:#000000;font-weight:400;text-align:right;">$436.45</div><div class="t" style="right:834px;top:394.15px;font-size:14px;color:#800080;font-weight:400;text-align:right;">$376.25</div><div class="t" style="left:1105px;top:394.15px;font-size:14px;color:#000000;font-weight:400;">Our Products</div><div class="t" style="left:1213px;top:394.15px;font-size:14px;color:#000000;font-weight:400;">ABC Stereo</div><div class="t" style="left:1322px;top:394.15px;font-size:14px;color:#000000;font-weight:400;">TV</div><div class="t" style="right:432px;top:394.15px;font-size:14px;color:#000000;font-weight:400;text-align:right;">$30.10</div><div class="t" style="right:331px;top:394.15px;font-size:14px;color:#000000;font-weight:400;text-align:right;">$30.10</div><div class="t" style="right:140px;top:394.15px;font-size:14px;color:#000000;font-weight:400;text-align:right;">$0.00</div><div class="t" style="left:1799px;top:394.15px;font-size:14px;color:#000000;font-weight:400;">Y</div><div class="a" style="left:193px;top:412px;width:527px;height:1px;background:#dcdcdc"></div><div class="a" style="left:721px;top:412px;width:1194px;height:1px;background:#dcdcdc"></div><div class="t" style="right:1624px;top:419.15px;font-size:14px;color:#000000;font-weight:400;text-align:right;">1</div><div class="t" style="left:315px;top:419.15px;font-size:14px;color:#000000;font-weight:400;">5 Disc CD Player</div><div class="t" style="right:1296px;top:419.15px;font-size:14px;color:#000080;font-weight:400;text-align:right;">$104.81</div><div class="t" style="right:1088px;top:419.15px;font-size:14px;color:#800080;font-weight:400;text-align:right;">$131.01</div><div class="t" style="right:968px;top:419.15px;font-size:14px;color:#000000;font-weight:400;text-align:right;">$151.97</div><div class="t" style="right:834px;top:419.15px;font-size:14px;color:#800080;font-weight:400;text-align:right;">$131.01</div><div class="t" style="left:1105px;top:419.15px;font-size:14px;color:#000000;font-weight:400;">Our Products</div><div class="t" style="left:1213px;top:419.15px;font-size:14px;color:#000000;font-weight:400;">ABC Stereo</div><div class="t" style="left:1322px;top:419.15px;font-size:14px;color:#000000;font-weight:400;">CD</div><div class="t" style="right:432px;top:419.15px;font-size:14px;color:#000000;font-weight:400;text-align:right;">$10.48</div><div class="t" style="right:331px;top:419.15px;font-size:14px;color:#000000;font-weight:400;text-align:right;">$10.48</div><div class="t" style="right:140px;top:419.15px;font-size:14px;color:#000000;font-weight:400;text-align:right;">$0.00</div><div class="t" style="left:1799px;top:419.15px;font-size:14px;color:#000000;font-weight:400;">Y</div><div class="a" style="left:193px;top:437px;width:527px;height:1px;background:#dcdcdc"></div><div class="a" style="left:721px;top:437px;width:1194px;height:1px;background:#dcdcdc"></div><div class="a" style="left:225px;top:439px;width:495px;height:23px;background:#e6ebfb"></div><div class="a" style="left:721px;top:439px;width:1194px;height:23px;background:#e6ebfb"></div><div class="t" style="right:1624px;top:444.15px;font-size:14px;color:#000000;font-weight:400;text-align:right;">1</div><div class="t" style="left:315px;top:444.15px;font-size:14px;color:#000000;font-weight:400;">Surround Sound Package</div><div class="t" style="right:1296px;top:444.15px;font-size:14px;color:#000080;font-weight:400;text-align:right;">$754.25</div><div class="t" style="right:1088px;top:444.15px;font-size:14px;color:#800080;font-weight:400;text-align:right;">$942.81</div><div class="t" style="right:968px;top:444.15px;font-size:14px;color:#000000;font-weight:400;text-align:right;">$1,093.66</div><div class="t" style="right:834px;top:444.15px;font-size:14px;color:#800080;font-weight:400;text-align:right;">$942.81</div><div class="t" style="left:1105px;top:444.15px;font-size:14px;color:#000000;font-weight:400;">Our Products</div><div class="t" style="left:1213px;top:444.15px;font-size:14px;color:#000000;font-weight:400;">ABC Stereo</div><div class="t" style="left:1322px;top:444.15px;font-size:14px;color:#000000;font-weight:400;">Speakers</div><div class="t" style="right:432px;top:444.15px;font-size:14px;color:#000000;font-weight:400;text-align:right;">$75.42</div><div class="t" style="right:331px;top:444.15px;font-size:14px;color:#000000;font-weight:400;text-align:right;">$75.42</div><div class="t" style="right:140px;top:444.15px;font-size:14px;color:#000000;font-weight:400;text-align:right;">$0.00</div><div class="t" style="left:1799px;top:444.15px;font-size:14px;color:#000000;font-weight:400;">Y</div><div class="a" style="left:193px;top:462px;width:527px;height:1px;background:#dcdcdc"></div><div class="a" style="left:721px;top:462px;width:1194px;height:1px;background:#dcdcdc"></div><div class="t" style="right:1624px;top:469.15px;font-size:14px;color:#000000;font-weight:400;text-align:right;">1</div><div class="t" style="left:315px;top:469.15px;font-size:14px;color:#000000;font-weight:400;">Mobile Theater Projector</div><div class="t" style="right:1296px;top:469.15px;font-size:14px;color:#000080;font-weight:400;text-align:right;">$2,846.00</div><div class="t" style="right:1088px;top:469.15px;font-size:14px;color:#800080;font-weight:400;text-align:right;">$3,557.50</div><div class="t" style="right:968px;top:469.15px;font-size:14px;color:#000000;font-weight:400;text-align:right;">$4,126.70</div><div class="t" style="right:834px;top:469.15px;font-size:14px;color:#800080;font-weight:400;text-align:right;">$3,557.50</div><div class="t" style="left:1105px;top:469.15px;font-size:14px;color:#000000;font-weight:400;">Our Products</div><div class="t" style="left:1213px;top:469.15px;font-size:14px;color:#000000;font-weight:400;">ABC Stereo</div><div class="t" style="left:1322px;top:469.15px;font-size:14px;color:#000000;font-weight:400;">Projector</div><div class="t" style="right:432px;top:469.15px;font-size:14px;color:#000000;font-weight:400;text-align:right;">$284.60</div><div class="t" style="right:331px;top:469.15px;font-size:14px;color:#000000;font-weight:400;text-align:right;">$284.60</div><div class="t" style="right:140px;top:469.15px;font-size:14px;color:#000000;font-weight:400;text-align:right;">$0.00</div><div class="t" style="left:1799px;top:469.15px;font-size:14px;color:#000000;font-weight:400;">Y</div><div class="a" style="left:193px;top:487px;width:527px;height:1px;background:#dcdcdc"></div><div class="a" style="left:721px;top:487px;width:1194px;height:1px;background:#dcdcdc"></div><div class="t" style="right:1624px;top:494.15px;font-size:14px;color:#000000;font-weight:400;text-align:right;">1</div><div class="t" style="left:315px;top:494.15px;font-size:14px;color:#000000;font-weight:400;">Ceiling Mount Kit MT 7</div><div class="t" style="right:1296px;top:494.15px;font-size:14px;color:#000080;font-weight:400;text-align:right;">$120.00</div><div class="t" style="right:1088px;top:494.15px;font-size:14px;color:#800080;font-weight:400;text-align:right;">$150.00</div><div class="t" style="right:968px;top:494.15px;font-size:14px;color:#000000;font-weight:400;text-align:right;">$174.00</div><div class="t" style="right:834px;top:494.15px;font-size:14px;color:#800080;font-weight:400;text-align:right;">$150.00</div><div class="t" style="left:1105px;top:494.15px;font-size:14px;color:#000000;font-weight:400;">Our Products</div><div class="t" style="left:1213px;top:494.15px;font-size:14px;color:#000000;font-weight:400;">ABC Stereo</div><div class="t" style="left:1322px;top:494.15px;font-size:14px;color:#000000;font-weight:400;">Projector</div><div class="t" style="right:432px;top:494.15px;font-size:14px;color:#000000;font-weight:400;text-align:right;">$12.00</div><div class="t" style="right:331px;top:494.15px;font-size:14px;color:#000000;font-weight:400;text-align:right;">$12.00</div><div class="t" style="right:140px;top:494.15px;font-size:14px;color:#000000;font-weight:400;text-align:right;">$0.00</div><div class="t" style="left:1799px;top:494.15px;font-size:14px;color:#000000;font-weight:400;">Y</div><div class="a" style="left:193px;top:512px;width:527px;height:1px;background:#dcdcdc"></div><div class="a" style="left:721px;top:512px;width:1194px;height:1px;background:#dcdcdc"></div><div class="t" style="right:1624px;top:519.15px;font-size:14px;color:#000000;font-weight:400;text-align:right;">1</div><div class="t" style="left:315px;top:519.15px;font-size:14px;color:#000000;font-weight:400;">3-Way Splitter/ Combiner</div><div class="t" style="right:1296px;top:519.15px;font-size:14px;color:#000080;font-weight:400;text-align:right;">$4.35</div><div class="t" style="left:643px;top:519.15px;font-size:14px;color:#000000;font-weight:400;">M05</div><div class="t" style="right:1088px;top:519.15px;font-size:14px;color:#800080;font-weight:400;text-align:right;">$4.57</div><div class="t" style="right:968px;top:519.15px;font-size:14px;color:#000000;font-weight:400;text-align:right;">$6.31</div><div class="t" style="right:834px;top:519.15px;font-size:14px;color:#800080;font-weight:400;text-align:right;">$4.57</div><div class="t" style="left:1105px;top:519.15px;font-size:14px;color:#000000;font-weight:400;">Our Products</div><div class="t" style="left:1213px;top:519.15px;font-size:14px;color:#000000;font-weight:400;">ABC Stereo</div><div class="t" style="left:1322px;top:519.15px;font-size:14px;color:#000000;font-weight:400;">TV</div><div class="t" style="right:432px;top:519.15px;font-size:14px;color:#000000;font-weight:400;text-align:right;">$0.37</div><div class="t" style="right:331px;top:519.15px;font-size:14px;color:#000000;font-weight:400;text-align:right;">$0.37</div><div class="t" style="right:140px;top:519.15px;font-size:14px;color:#000000;font-weight:400;text-align:right;">$0.00</div><div class="t" style="left:1799px;top:519.15px;font-size:14px;color:#000000;font-weight:400;">Y</div><div class="a" style="left:193px;top:537px;width:527px;height:1px;background:#dcdcdc"></div><div class="a" style="left:721px;top:537px;width:1194px;height:1px;background:#dcdcdc"></div><div class="a" style="left:959px;top:539px;width:133px;height:23px;background:#99ccff"></div><div class="t" style="left:315px;top:544.15px;font-size:14px;color:#000000;font-weight:700;">SubTotal</div><div class="t" style="right:834px;top:544.15px;font-size:14px;color:#000000;font-weight:700;text-align:right;">$5,162.14</div><div class="t" style="right:432px;top:544.15px;font-size:14px;color:#000000;font-weight:700;text-align:right;">$412.97</div><div class="t" style="right:331px;top:544.15px;font-size:14px;color:#000000;font-weight:700;text-align:right;">$412.97</div><div class="t" style="right:140px;top:544.15px;font-size:14px;color:#000000;font-weight:700;text-align:right;">$0.00</div><div class="a" style="left:193px;top:562px;width:527px;height:1px;background:#dcdcdc"></div><div class="a" style="left:721px;top:562px;width:1194px;height:1px;background:#dcdcdc"></div><div class="a" style="left:959px;top:564px;width:133px;height:23px;background:#ffff00"></div><div class="t" style="left:315px;top:569.15px;font-size:14px;color:#000000;font-weight:400;">New Customer 5.0% Discount</div><div class="t" style="right:834px;top:569.15px;font-size:14px;color:#800080;font-weight:400;text-align:right;">-$258.11</div><div class="t" style="left:1322px;top:569.15px;font-size:14px;color:#000000;font-weight:400;">Product</div><div class="t" style="right:432px;top:569.15px;font-size:14px;color:#000000;font-weight:400;text-align:right;">$0.00</div><div class="t" style="right:331px;top:569.15px;font-size:14px;color:#000000;font-weight:400;text-align:right;">$0.00</div><div class="t" style="right:140px;top:569.15px;font-size:14px;color:#000000;font-weight:400;text-align:right;">$0.00</div><div class="t" style="left:1799px;top:569.15px;font-size:14px;color:#000000;font-weight:400;">Y</div><div class="a" style="left:193px;top:587px;width:527px;height:1px;background:#dcdcdc"></div><div class="a" style="left:721px;top:587px;width:1194px;height:1px;background:#dcdcdc"></div><div class="a" style="left:225px;top:589px;width:495px;height:23px;background:#8c8c8c"></div><div class="a" style="left:721px;top:589px;width:237px;height:23px;background:#8c8c8c"></div><div class="a" style="left:1092px;top:589px;width:823px;height:23px;background:#8c8c8c"></div><div class="t" style="left:315px;top:594.15px;font-size:14px;color:#ffffff;font-weight:400;">Installation + Labor</div><div class="t" style="right:834px;top:594.15px;font-size:14px;color:#800080;font-weight:400;text-align:right;">$206.25</div><div class="a" style="left:193px;top:612px;width:527px;height:1px;background:#dcdcdc"></div><div class="a" style="left:721px;top:612px;width:1194px;height:1px;background:#dcdcdc"></div><div class="t" style="right:1624px;top:619.15px;font-size:14px;color:#000000;font-weight:400;text-align:right;">1</div><div class="t" style="left:315px;top:619.15px;font-size:14px;color:#000000;font-weight:400;">Labor - Flat Rate</div><div class="t" style="right:1296px;top:619.15px;font-size:14px;color:#000080;font-weight:400;text-align:right;">$65.00</div><div class="t" style="right:1088px;top:619.15px;font-size:14px;color:#800080;font-weight:400;text-align:right;">$81.25</div><div class="t" style="right:968px;top:619.15px;font-size:14px;color:#000000;font-weight:400;text-align:right;">$94.25</div><div class="t" style="right:834px;top:619.15px;font-size:14px;color:#800080;font-weight:400;text-align:right;">$81.25</div><div class="t" style="left:1105px;top:619.15px;font-size:14px;color:#000000;font-weight:400;">Our Products</div><div class="t" style="left:1213px;top:619.15px;font-size:14px;color:#000000;font-weight:400;">ABC Stereo</div><div class="t" style="left:1322px;top:619.15px;font-size:14px;color:#000000;font-weight:400;">Labor</div><div class="t" style="right:432px;top:619.15px;font-size:14px;color:#000000;font-weight:400;text-align:right;">$6.50</div><div class="t" style="right:331px;top:619.15px;font-size:14px;color:#000000;font-weight:400;text-align:right;">$6.50</div><div class="t" style="right:140px;top:619.15px;font-size:14px;color:#000000;font-weight:400;text-align:right;">$0.00</div><div class="t" style="left:1799px;top:619.15px;font-size:14px;color:#000000;font-weight:400;">Y</div><div class="a" style="left:193px;top:637px;width:527px;height:1px;background:#dcdcdc"></div><div class="a" style="left:721px;top:637px;width:1194px;height:1px;background:#dcdcdc"></div><div class="t" style="right:1624px;top:644.15px;font-size:14px;color:#000000;font-weight:400;text-align:right;">1</div><div class="t" style="left:315px;top:644.15px;font-size:14px;color:#000000;font-weight:400;">Labor - Audio/Video Setup</div><div class="t" style="right:1296px;top:644.15px;font-size:14px;color:#000080;font-weight:400;text-align:right;">$65.00</div><div class="t" style="right:1088px;top:644.15px;font-size:14px;color:#800080;font-weight:400;text-align:right;">$81.25</div><div class="t" style="right:968px;top:644.15px;font-size:14px;color:#000000;font-weight:400;text-align:right;">$94.25</div><div class="t" style="right:834px;top:644.15px;font-size:14px;color:#800080;font-weight:400;text-align:right;">$81.25</div><div class="t" style="left:1105px;top:644.15px;font-size:14px;color:#000000;font-weight:400;">Our Products</div><div class="t" style="left:1213px;top:644.15px;font-size:14px;color:#000000;font-weight:400;">ABC Stereo</div><div class="t" style="left:1322px;top:644.15px;font-size:14px;color:#000000;font-weight:400;">Labor</div><div class="t" style="right:432px;top:644.15px;font-size:14px;color:#000000;font-weight:400;text-align:right;">$6.50</div><div class="t" style="right:331px;top:644.15px;font-size:14px;color:#000000;font-weight:400;text-align:right;">$6.50</div><div class="t" style="right:140px;top:644.15px;font-size:14px;color:#000000;font-weight:400;text-align:right;">$0.00</div><div class="t" style="left:1799px;top:644.15px;font-size:14px;color:#000000;font-weight:400;">Y</div><div class="a" style="left:193px;top:662px;width:527px;height:1px;background:#dcdcdc"></div><div class="a" style="left:721px;top:662px;width:1194px;height:1px;background:#dcdcdc"></div><div class="t" style="right:1624px;top:669.15px;font-size:14px;color:#000000;font-weight:400;text-align:right;">1</div><div class="t" style="left:315px;top:669.15px;font-size:14px;color:#000000;font-weight:400;">Labor - Misc.</div><div class="t" style="right:1296px;top:669.15px;font-size:14px;color:#000080;font-weight:400;text-align:right;">$35.00</div><div class="t" style="right:1088px;top:669.15px;font-size:14px;color:#800080;font-weight:400;text-align:right;">$43.75</div><div class="t" style="right:968px;top:669.15px;font-size:14px;color:#000000;font-weight:400;text-align:right;">$50.75</div><div class="t" style="right:834px;top:669.15px;font-size:14px;color:#800080;font-weight:400;text-align:right;">$43.75</div><div class="t" style="left:1105px;top:669.15px;font-size:14px;color:#000000;font-weight:400;">Our Products</div><div class="t" style="left:1213px;top:669.15px;font-size:14px;color:#000000;font-weight:400;">ABC Stereo</div><div class="t" style="left:1322px;top:669.15px;font-size:14px;color:#000000;font-weight:400;">Labor</div><div class="t" style="right:432px;top:669.15px;font-size:14px;color:#000000;font-weight:400;text-align:right;">$3.50</div><div class="t" style="right:331px;top:669.15px;font-size:14px;color:#000000;font-weight:400;text-align:right;">$3.50</div><div class="t" style="right:140px;top:669.15px;font-size:14px;color:#000000;font-weight:400;text-align:right;">$0.00</div><div class="t" style="left:1799px;top:669.15px;font-size:14px;color:#000000;font-weight:400;">Y</div><div class="a" style="left:193px;top:687px;width:527px;height:1px;background:#dcdcdc"></div><div class="a" style="left:721px;top:687px;width:1194px;height:1px;background:#dcdcdc"></div><div class="a" style="left:225px;top:689px;width:495px;height:23px;background:#8c8c8c"></div><div class="a" style="left:721px;top:689px;width:237px;height:23px;background:#8c8c8c"></div><div class="a" style="left:1092px;top:689px;width:823px;height:23px;background:#8c8c8c"></div><div class="t" style="left:315px;top:694.15px;font-size:14px;color:#ffffff;font-weight:400;">Warranty</div><div class="t" style="right:834px;top:694.15px;font-size:14px;color:#800080;font-weight:400;text-align:right;">$161.93</div><div class="a" style="left:193px;top:712px;width:527px;height:1px;background:#dcdcdc"></div><div class="a" style="left:721px;top:712px;width:1194px;height:1px;background:#dcdcdc"></div><div class="t" style="right:1624px;top:719.15px;font-size:14px;color:#000000;font-weight:400;text-align:right;">1</div><div class="t" style="left:315px;top:719.15px;font-size:14px;color:#000000;font-weight:400;">Extended Electronics Warra…</div><div class="t" style="right:1296px;top:719.15px;font-size:14px;color:#000080;font-weight:400;text-align:right;">$129.54</div><div class="t" style="right:1088px;top:719.15px;font-size:14px;color:#800080;font-weight:400;text-align:right;">$161.93</div><div class="t" style="right:968px;top:719.15px;font-size:14px;color:#000000;font-weight:400;text-align:right;">$187.83</div><div class="t" style="right:834px;top:719.15px;font-size:14px;color:#800080;font-weight:400;text-align:right;">$161.93</div><div class="t" style="left:1105px;top:719.15px;font-size:14px;color:#000000;font-weight:400;">Our Products</div><div class="t" style="left:1213px;top:719.15px;font-size:14px;color:#000000;font-weight:400;">ABC Stereo</div><div class="t" style="left:1322px;top:719.15px;font-size:14px;color:#000000;font-weight:400;">SPP</div><div class="t" style="right:432px;top:719.15px;font-size:14px;color:#000000;font-weight:400;text-align:right;">$12.95</div><div class="t" style="right:331px;top:719.15px;font-size:14px;color:#000000;font-weight:400;text-align:right;">$12.95</div><div class="t" style="right:140px;top:719.15px;font-size:14px;color:#000000;font-weight:400;text-align:right;">$0.00</div><div class="t" style="left:1799px;top:719.15px;font-size:14px;color:#000000;font-weight:400;">Y</div><div class="a" style="left:193px;top:737px;width:527px;height:1px;background:#dcdcdc"></div><div class="a" style="left:721px;top:737px;width:1194px;height:1px;background:#dcdcdc"></div><div class="a" style="left:959px;top:739px;width:133px;height:23px;background:#99ccff"></div><div class="t" style="left:315px;top:744.15px;font-size:14px;color:#000000;font-weight:700;">Running SubTotal</div><div class="t" style="right:834px;top:744.15px;font-size:14px;color:#000000;font-weight:700;text-align:right;">$5,272.21</div><div class="t" style="right:432px;top:744.15px;font-size:14px;color:#000000;font-weight:700;text-align:right;">$442.42</div><div class="t" style="right:331px;top:744.15px;font-size:14px;color:#000000;font-weight:700;text-align:right;">$421.77</div><div class="t" style="right:140px;top:744.15px;font-size:14px;color:#000000;font-weight:700;text-align:right;">$0.00</div><div class="a" style="left:193px;top:762px;width:527px;height:1px;background:#dcdcdc"></div><div class="a" style="left:721px;top:762px;width:1194px;height:1px;background:#dcdcdc"></div><div class="a" style="left:224px;top:363px;width:1px;height:24px;background:repeating-linear-gradient(to bottom,transparent 0 1px,#ffffff 1px 2px)"></div><div class="a" style="left:224px;top:388px;width:1px;height:24px;background:repeating-linear-gradient(to bottom,transparent 0 1px,#b8b8b8 1px 2px)"></div><div class="a" style="left:224px;top:413px;width:1px;height:24px;background:repeating-linear-gradient(to bottom,transparent 0 1px,#b8b8b8 1px 2px)"></div><div class="a" style="left:224px;top:463px;width:1px;height:24px;background:repeating-linear-gradient(to bottom,transparent 0 1px,#b8b8b8 1px 2px)"></div><div class="a" style="left:224px;top:488px;width:1px;height:24px;background:repeating-linear-gradient(to bottom,transparent 0 1px,#b8b8b8 1px 2px)"></div><div class="a" style="left:224px;top:513px;width:1px;height:24px;background:repeating-linear-gradient(to bottom,transparent 0 1px,#b8b8b8 1px 2px)"></div><div class="a" style="left:224px;top:538px;width:1px;height:24px;background:repeating-linear-gradient(to bottom,transparent 0 1px,#b8b8b8 1px 2px)"></div><div class="a" style="left:224px;top:563px;width:1px;height:24px;background:repeating-linear-gradient(to bottom,transparent 0 1px,#b8b8b8 1px 2px)"></div><div class="a" style="left:224px;top:588px;width:1px;height:24px;background:repeating-linear-gradient(to bottom,transparent 0 1px,#ffffff 1px 2px)"></div><div class="a" style="left:224px;top:613px;width:1px;height:24px;background:repeating-linear-gradient(to bottom,transparent 0 1px,#b8b8b8 1px 2px)"></div><div class="a" style="left:224px;top:638px;width:1px;height:24px;background:repeating-linear-gradient(to bottom,transparent 0 1px,#b8b8b8 1px 2px)"></div><div class="a" style="left:224px;top:663px;width:1px;height:24px;background:repeating-linear-gradient(to bottom,transparent 0 1px,#b8b8b8 1px 2px)"></div><div class="a" style="left:224px;top:688px;width:1px;height:24px;background:repeating-linear-gradient(to bottom,transparent 0 1px,#ffffff 1px 2px)"></div><div class="a" style="left:224px;top:713px;width:1px;height:24px;background:repeating-linear-gradient(to bottom,transparent 0 1px,#b8b8b8 1px 2px)"></div><div class="a" style="left:224px;top:738px;width:1px;height:24px;background:repeating-linear-gradient(to bottom,transparent 0 1px,#b8b8b8 1px 2px)"></div><div class="a" style="left:302px;top:363px;width:1px;height:24px;background:repeating-linear-gradient(to bottom,transparent 0 1px,rgba(255,255,255,0.9) 1px 2px)"></div><div class="a" style="left:302px;top:388px;width:1px;height:24px;background:repeating-linear-gradient(to bottom,transparent 0 1px,#b8b8b8 1px 2px)"></div><div class="a" style="left:302px;top:413px;width:1px;height:24px;background:repeating-linear-gradient(to bottom,transparent 0 1px,#b8b8b8 1px 2px)"></div><div class="a" style="left:302px;top:438px;width:1px;height:24px;background:repeating-linear-gradient(to bottom,transparent 0 1px,#b8b8b8 1px 2px)"></div><div class="a" style="left:302px;top:463px;width:1px;height:24px;background:repeating-linear-gradient(to bottom,transparent 0 1px,#b8b8b8 1px 2px)"></div><div class="a" style="left:302px;top:488px;width:1px;height:24px;background:repeating-linear-gradient(to bottom,transparent 0 1px,#b8b8b8 1px 2px)"></div><div class="a" style="left:302px;top:513px;width:1px;height:24px;background:repeating-linear-gradient(to bottom,transparent 0 1px,#b8b8b8 1px 2px)"></div><div class="a" style="left:302px;top:538px;width:1px;height:24px;background:repeating-linear-gradient(to bottom,transparent 0 1px,#b8b8b8 1px 2px)"></div><div class="a" style="left:302px;top:563px;width:1px;height:24px;background:repeating-linear-gradient(to bottom,transparent 0 1px,#b8b8b8 1px 2px)"></div><div class="a" style="left:302px;top:588px;width:1px;height:24px;background:repeating-linear-gradient(to bottom,transparent 0 1px,rgba(255,255,255,0.9) 1px 2px)"></div><div class="a" style="left:302px;top:613px;width:1px;height:24px;background:repeating-linear-gradient(to bottom,transparent 0 1px,#b8b8b8 1px 2px)"></div><div class="a" style="left:302px;top:638px;width:1px;height:24px;background:repeating-linear-gradient(to bottom,transparent 0 1px,#b8b8b8 1px 2px)"></div><div class="a" style="left:302px;top:663px;width:1px;height:24px;background:repeating-linear-gradient(to bottom,transparent 0 1px,#b8b8b8 1px 2px)"></div><div class="a" style="left:302px;top:688px;width:1px;height:24px;background:repeating-linear-gradient(to bottom,transparent 0 1px,rgba(255,255,255,0.9) 1px 2px)"></div><div class="a" style="left:302px;top:713px;width:1px;height:24px;background:repeating-linear-gradient(to bottom,transparent 0 1px,#b8b8b8 1px 2px)"></div><div class="a" style="left:302px;top:738px;width:1px;height:24px;background:repeating-linear-gradient(to bottom,transparent 0 1px,#b8b8b8 1px 2px)"></div><div class="a" style="left:516px;top:363px;width:1px;height:24px;background:repeating-linear-gradient(to bottom,transparent 0 1px,rgba(255,255,255,0.9) 1px 2px)"></div><div class="a" style="left:516px;top:388px;width:1px;height:24px;background:repeating-linear-gradient(to bottom,transparent 0 1px,#b8b8b8 1px 2px)"></div><div class="a" style="left:516px;top:413px;width:1px;height:24px;background:repeating-linear-gradient(to bottom,transparent 0 1px,#b8b8b8 1px 2px)"></div><div class="a" style="left:516px;top:438px;width:1px;height:24px;background:repeating-linear-gradient(to bottom,transparent 0 1px,#b8b8b8 1px 2px)"></div><div class="a" style="left:516px;top:463px;width:1px;height:24px;background:repeating-linear-gradient(to bottom,transparent 0 1px,#b8b8b8 1px 2px)"></div><div class="a" style="left:516px;top:488px;width:1px;height:24px;background:repeating-linear-gradient(to bottom,transparent 0 1px,#b8b8b8 1px 2px)"></div><div class="a" style="left:516px;top:513px;width:1px;height:24px;background:repeating-linear-gradient(to bottom,transparent 0 1px,#b8b8b8 1px 2px)"></div><div class="a" style="left:516px;top:538px;width:1px;height:24px;background:repeating-linear-gradient(to bottom,transparent 0 1px,#b8b8b8 1px 2px)"></div><div class="a" style="left:516px;top:563px;width:1px;height:24px;background:repeating-linear-gradient(to bottom,transparent 0 1px,#b8b8b8 1px 2px)"></div><div class="a" style="left:516px;top:588px;width:1px;height:24px;background:repeating-linear-gradient(to bottom,transparent 0 1px,rgba(255,255,255,0.9) 1px 2px)"></div><div class="a" style="left:516px;top:613px;width:1px;height:24px;background:repeating-linear-gradient(to bottom,transparent 0 1px,#b8b8b8 1px 2px)"></div><div class="a" style="left:516px;top:638px;width:1px;height:24px;background:repeating-linear-gradient(to bottom,transparent 0 1px,#b8b8b8 1px 2px)"></div><div class="a" style="left:516px;top:663px;width:1px;height:24px;background:repeating-linear-gradient(to bottom,transparent 0 1px,#b8b8b8 1px 2px)"></div><div class="a" style="left:516px;top:688px;width:1px;height:24px;background:repeating-linear-gradient(to bottom,transparent 0 1px,rgba(255,255,255,0.9) 1px 2px)"></div><div class="a" style="left:516px;top:713px;width:1px;height:24px;background:repeating-linear-gradient(to bottom,transparent 0 1px,#b8b8b8 1px 2px)"></div><div class="a" style="left:516px;top:738px;width:1px;height:24px;background:repeating-linear-gradient(to bottom,transparent 0 1px,#b8b8b8 1px 2px)"></div><div class="a" style="left:630px;top:363px;width:1px;height:24px;background:repeating-linear-gradient(to bottom,transparent 0 1px,rgba(255,255,255,0.9) 1px 2px)"></div><div class="a" style="left:630px;top:388px;width:1px;height:24px;background:repeating-linear-gradient(to bottom,transparent 0 1px,#b8b8b8 1px 2px)"></div><div class="a" style="left:630px;top:413px;width:1px;height:24px;background:repeating-linear-gradient(to bottom,transparent 0 1px,#b8b8b8 1px 2px)"></div><div class="a" style="left:630px;top:438px;width:1px;height:24px;background:repeating-linear-gradient(to bottom,transparent 0 1px,#b8b8b8 1px 2px)"></div><div class="a" style="left:630px;top:463px;width:1px;height:24px;background:repeating-linear-gradient(to bottom,transparent 0 1px,#b8b8b8 1px 2px)"></div><div class="a" style="left:630px;top:488px;width:1px;height:24px;background:repeating-linear-gradient(to bottom,transparent 0 1px,#b8b8b8 1px 2px)"></div><div class="a" style="left:630px;top:513px;width:1px;height:24px;background:repeating-linear-gradient(to bottom,transparent 0 1px,#b8b8b8 1px 2px)"></div><div class="a" style="left:630px;top:538px;width:1px;height:24px;background:repeating-linear-gradient(to bottom,transparent 0 1px,#b8b8b8 1px 2px)"></div><div class="a" style="left:630px;top:563px;width:1px;height:24px;background:repeating-linear-gradient(to bottom,transparent 0 1px,#b8b8b8 1px 2px)"></div><div class="a" style="left:630px;top:588px;width:1px;height:24px;background:repeating-linear-gradient(to bottom,transparent 0 1px,rgba(255,255,255,0.9) 1px 2px)"></div><div class="a" style="left:630px;top:613px;width:1px;height:24px;background:repeating-linear-gradient(to bottom,transparent 0 1px,#b8b8b8 1px 2px)"></div><div class="a" style="left:630px;top:638px;width:1px;height:24px;background:repeating-linear-gradient(to bottom,transparent 0 1px,#b8b8b8 1px 2px)"></div><div class="a" style="left:630px;top:663px;width:1px;height:24px;background:repeating-linear-gradient(to bottom,transparent 0 1px,#b8b8b8 1px 2px)"></div><div class="a" style="left:630px;top:688px;width:1px;height:24px;background:repeating-linear-gradient(to bottom,transparent 0 1px,rgba(255,255,255,0.9) 1px 2px)"></div><div class="a" style="left:630px;top:713px;width:1px;height:24px;background:repeating-linear-gradient(to bottom,transparent 0 1px,#b8b8b8 1px 2px)"></div><div class="a" style="left:630px;top:738px;width:1px;height:24px;background:repeating-linear-gradient(to bottom,transparent 0 1px,#b8b8b8 1px 2px)"></div><div class="a" style="left:838px;top:363px;width:1px;height:24px;background:repeating-linear-gradient(to bottom,transparent 0 1px,rgba(255,255,255,0.9) 1px 2px)"></div><div class="a" style="left:838px;top:388px;width:1px;height:24px;background:repeating-linear-gradient(to bottom,transparent 0 1px,#b8b8b8 1px 2px)"></div><div class="a" style="left:838px;top:413px;width:1px;height:24px;background:repeating-linear-gradient(to bottom,transparent 0 1px,#b8b8b8 1px 2px)"></div><div class="a" style="left:838px;top:438px;width:1px;height:24px;background:repeating-linear-gradient(to bottom,transparent 0 1px,#b8b8b8 1px 2px)"></div><div class="a" style="left:838px;top:463px;width:1px;height:24px;background:repeating-linear-gradient(to bottom,transparent 0 1px,#b8b8b8 1px 2px)"></div><div class="a" style="left:838px;top:488px;width:1px;height:24px;background:repeating-linear-gradient(to bottom,transparent 0 1px,#b8b8b8 1px 2px)"></div><div class="a" style="left:838px;top:513px;width:1px;height:24px;background:repeating-linear-gradient(to bottom,transparent 0 1px,#b8b8b8 1px 2px)"></div><div class="a" style="left:838px;top:538px;width:1px;height:24px;background:repeating-linear-gradient(to bottom,transparent 0 1px,#b8b8b8 1px 2px)"></div><div class="a" style="left:838px;top:563px;width:1px;height:24px;background:repeating-linear-gradient(to bottom,transparent 0 1px,#b8b8b8 1px 2px)"></div><div class="a" style="left:838px;top:588px;width:1px;height:24px;background:repeating-linear-gradient(to bottom,transparent 0 1px,rgba(255,255,255,0.9) 1px 2px)"></div><div class="a" style="left:838px;top:613px;width:1px;height:24px;background:repeating-linear-gradient(to bottom,transparent 0 1px,#b8b8b8 1px 2px)"></div><div class="a" style="left:838px;top:638px;width:1px;height:24px;background:repeating-linear-gradient(to bottom,transparent 0 1px,#b8b8b8 1px 2px)"></div><div class="a" style="left:838px;top:663px;width:1px;height:24px;background:repeating-linear-gradient(to bottom,transparent 0 1px,#b8b8b8 1px 2px)"></div><div class="a" style="left:838px;top:688px;width:1px;height:24px;background:repeating-linear-gradient(to bottom,transparent 0 1px,rgba(255,255,255,0.9) 1px 2px)"></div><div class="a" style="left:838px;top:713px;width:1px;height:24px;background:repeating-linear-gradient(to bottom,transparent 0 1px,#b8b8b8 1px 2px)"></div><div class="a" style="left:838px;top:738px;width:1px;height:24px;background:repeating-linear-gradient(to bottom,transparent 0 1px,#b8b8b8 1px 2px)"></div><div class="a" style="left:958px;top:363px;width:1px;height:24px;background:repeating-linear-gradient(to bottom,transparent 0 1px,#b8b8b8 1px 2px)"></div><div class="a" style="left:958px;top:388px;width:1px;height:24px;background:repeating-linear-gradient(to bottom,transparent 0 1px,#b8b8b8 1px 2px)"></div><div class="a" style="left:958px;top:413px;width:1px;height:24px;background:repeating-linear-gradient(to bottom,transparent 0 1px,#b8b8b8 1px 2px)"></div><div class="a" style="left:958px;top:438px;width:1px;height:24px;background:repeating-linear-gradient(to bottom,transparent 0 1px,#b8b8b8 1px 2px)"></div><div class="a" style="left:958px;top:463px;width:1px;height:24px;background:repeating-linear-gradient(to bottom,transparent 0 1px,#b8b8b8 1px 2px)"></div><div class="a" style="left:958px;top:488px;width:1px;height:24px;background:repeating-linear-gradient(to bottom,transparent 0 1px,#b8b8b8 1px 2px)"></div><div class="a" style="left:958px;top:513px;width:1px;height:24px;background:repeating-linear-gradient(to bottom,transparent 0 1px,#b8b8b8 1px 2px)"></div><div class="a" style="left:958px;top:538px;width:1px;height:24px;background:repeating-linear-gradient(to bottom,transparent 0 1px,#b8b8b8 1px 2px)"></div><div class="a" style="left:958px;top:563px;width:1px;height:24px;background:repeating-linear-gradient(to bottom,transparent 0 1px,#b8b8b8 1px 2px)"></div><div class="a" style="left:958px;top:588px;width:1px;height:24px;background:repeating-linear-gradient(to bottom,transparent 0 1px,#b8b8b8 1px 2px)"></div><div class="a" style="left:958px;top:613px;width:1px;height:24px;background:repeating-linear-gradient(to bottom,transparent 0 1px,#b8b8b8 1px 2px)"></div><div class="a" style="left:958px;top:638px;width:1px;height:24px;background:repeating-linear-gradient(to bottom,transparent 0 1px,#b8b8b8 1px 2px)"></div><div class="a" style="left:958px;top:663px;width:1px;height:24px;background:repeating-linear-gradient(to bottom,transparent 0 1px,#b8b8b8 1px 2px)"></div><div class="a" style="left:958px;top:688px;width:1px;height:24px;background:repeating-linear-gradient(to bottom,transparent 0 1px,#b8b8b8 1px 2px)"></div><div class="a" style="left:958px;top:713px;width:1px;height:24px;background:repeating-linear-gradient(to bottom,transparent 0 1px,#b8b8b8 1px 2px)"></div><div class="a" style="left:958px;top:738px;width:1px;height:24px;background:repeating-linear-gradient(to bottom,transparent 0 1px,#b8b8b8 1px 2px)"></div><div class="a" style="left:1092px;top:363px;width:1px;height:24px;background:repeating-linear-gradient(to bottom,transparent 0 1px,rgba(255,255,255,0.9) 1px 2px)"></div><div class="a" style="left:1092px;top:388px;width:1px;height:24px;background:repeating-linear-gradient(to bottom,transparent 0 1px,#b8b8b8 1px 2px)"></div><div class="a" style="left:1092px;top:413px;width:1px;height:24px;background:repeating-linear-gradient(to bottom,transparent 0 1px,#b8b8b8 1px 2px)"></div><div class="a" style="left:1092px;top:438px;width:1px;height:24px;background:repeating-linear-gradient(to bottom,transparent 0 1px,#b8b8b8 1px 2px)"></div><div class="a" style="left:1092px;top:463px;width:1px;height:24px;background:repeating-linear-gradient(to bottom,transparent 0 1px,#b8b8b8 1px 2px)"></div><div class="a" style="left:1092px;top:488px;width:1px;height:24px;background:repeating-linear-gradient(to bottom,transparent 0 1px,#b8b8b8 1px 2px)"></div><div class="a" style="left:1092px;top:513px;width:1px;height:24px;background:repeating-linear-gradient(to bottom,transparent 0 1px,#b8b8b8 1px 2px)"></div><div class="a" style="left:1092px;top:538px;width:1px;height:24px;background:repeating-linear-gradient(to bottom,transparent 0 1px,#b8b8b8 1px 2px)"></div><div class="a" style="left:1092px;top:563px;width:1px;height:24px;background:repeating-linear-gradient(to bottom,transparent 0 1px,#b8b8b8 1px 2px)"></div><div class="a" style="left:1092px;top:588px;width:1px;height:24px;background:repeating-linear-gradient(to bottom,transparent 0 1px,rgba(255,255,255,0.9) 1px 2px)"></div><div class="a" style="left:1092px;top:613px;width:1px;height:24px;background:repeating-linear-gradient(to bottom,transparent 0 1px,#b8b8b8 1px 2px)"></div><div class="a" style="left:1092px;top:638px;width:1px;height:24px;background:repeating-linear-gradient(to bottom,transparent 0 1px,#b8b8b8 1px 2px)"></div><div class="a" style="left:1092px;top:663px;width:1px;height:24px;background:repeating-linear-gradient(to bottom,transparent 0 1px,#b8b8b8 1px 2px)"></div><div class="a" style="left:1092px;top:688px;width:1px;height:24px;background:repeating-linear-gradient(to bottom,transparent 0 1px,rgba(255,255,255,0.9) 1px 2px)"></div><div class="a" style="left:1092px;top:713px;width:1px;height:24px;background:repeating-linear-gradient(to bottom,transparent 0 1px,#b8b8b8 1px 2px)"></div><div class="a" style="left:1092px;top:738px;width:1px;height:24px;background:repeating-linear-gradient(to bottom,transparent 0 1px,#b8b8b8 1px 2px)"></div><div class="a" style="left:1200px;top:363px;width:1px;height:24px;background:repeating-linear-gradient(to bottom,transparent 0 1px,rgba(255,255,255,0.9) 1px 2px)"></div><div class="a" style="left:1200px;top:388px;width:1px;height:24px;background:repeating-linear-gradient(to bottom,transparent 0 1px,#b8b8b8 1px 2px)"></div><div class="a" style="left:1200px;top:413px;width:1px;height:24px;background:repeating-linear-gradient(to bottom,transparent 0 1px,#b8b8b8 1px 2px)"></div><div class="a" style="left:1200px;top:438px;width:1px;height:24px;background:repeating-linear-gradient(to bottom,transparent 0 1px,#b8b8b8 1px 2px)"></div><div class="a" style="left:1200px;top:463px;width:1px;height:24px;background:repeating-linear-gradient(to bottom,transparent 0 1px,#b8b8b8 1px 2px)"></div><div class="a" style="left:1200px;top:488px;width:1px;height:24px;background:repeating-linear-gradient(to bottom,transparent 0 1px,#b8b8b8 1px 2px)"></div><div class="a" style="left:1200px;top:513px;width:1px;height:24px;background:repeating-linear-gradient(to bottom,transparent 0 1px,#b8b8b8 1px 2px)"></div><div class="a" style="left:1200px;top:538px;width:1px;height:24px;background:repeating-linear-gradient(to bottom,transparent 0 1px,#b8b8b8 1px 2px)"></div><div class="a" style="left:1200px;top:563px;width:1px;height:24px;background:repeating-linear-gradient(to bottom,transparent 0 1px,#b8b8b8 1px 2px)"></div><div class="a" style="left:1200px;top:588px;width:1px;height:24px;background:repeating-linear-gradient(to bottom,transparent 0 1px,rgba(255,255,255,0.9) 1px 2px)"></div><div class="a" style="left:1200px;top:613px;width:1px;height:24px;background:repeating-linear-gradient(to bottom,transparent 0 1px,#b8b8b8 1px 2px)"></div><div class="a" style="left:1200px;top:638px;width:1px;height:24px;background:repeating-linear-gradient(to bottom,transparent 0 1px,#b8b8b8 1px 2px)"></div><div class="a" style="left:1200px;top:663px;width:1px;height:24px;background:repeating-linear-gradient(to bottom,transparent 0 1px,#b8b8b8 1px 2px)"></div><div class="a" style="left:1200px;top:688px;width:1px;height:24px;background:repeating-linear-gradient(to bottom,transparent 0 1px,rgba(255,255,255,0.9) 1px 2px)"></div><div class="a" style="left:1200px;top:713px;width:1px;height:24px;background:repeating-linear-gradient(to bottom,transparent 0 1px,#b8b8b8 1px 2px)"></div><div class="a" style="left:1200px;top:738px;width:1px;height:24px;background:repeating-linear-gradient(to bottom,transparent 0 1px,#b8b8b8 1px 2px)"></div><div class="a" style="left:1309px;top:363px;width:1px;height:24px;background:repeating-linear-gradient(to bottom,transparent 0 1px,rgba(255,255,255,0.9) 1px 2px)"></div><div class="a" style="left:1309px;top:388px;width:1px;height:24px;background:repeating-linear-gradient(to bottom,transparent 0 1px,#b8b8b8 1px 2px)"></div><div class="a" style="left:1309px;top:413px;width:1px;height:24px;background:repeating-linear-gradient(to bottom,transparent 0 1px,#b8b8b8 1px 2px)"></div><div class="a" style="left:1309px;top:438px;width:1px;height:24px;background:repeating-linear-gradient(to bottom,transparent 0 1px,#b8b8b8 1px 2px)"></div><div class="a" style="left:1309px;top:463px;width:1px;height:24px;background:repeating-linear-gradient(to bottom,transparent 0 1px,#b8b8b8 1px 2px)"></div><div class="a" style="left:1309px;top:488px;width:1px;height:24px;background:repeating-linear-gradient(to bottom,transparent 0 1px,#b8b8b8 1px 2px)"></div><div class="a" style="left:1309px;top:513px;width:1px;height:24px;background:repeating-linear-gradient(to bottom,transparent 0 1px,#b8b8b8 1px 2px)"></div><div class="a" style="left:1309px;top:538px;width:1px;height:24px;background:repeating-linear-gradient(to bottom,transparent 0 1px,#b8b8b8 1px 2px)"></div><div class="a" style="left:1309px;top:563px;width:1px;height:24px;background:repeating-linear-gradient(to bottom,transparent 0 1px,#b8b8b8 1px 2px)"></div><div class="a" style="left:1309px;top:588px;width:1px;height:24px;background:repeating-linear-gradient(to bottom,transparent 0 1px,rgba(255,255,255,0.9) 1px 2px)"></div><div class="a" style="left:1309px;top:613px;width:1px;height:24px;background:repeating-linear-gradient(to bottom,transparent 0 1px,#b8b8b8 1px 2px)"></div><div class="a" style="left:1309px;top:638px;width:1px;height:24px;background:repeating-linear-gradient(to bottom,transparent 0 1px,#b8b8b8 1px 2px)"></div><div class="a" style="left:1309px;top:663px;width:1px;height:24px;background:repeating-linear-gradient(to bottom,transparent 0 1px,#b8b8b8 1px 2px)"></div><div class="a" style="left:1309px;top:688px;width:1px;height:24px;background:repeating-linear-gradient(to bottom,transparent 0 1px,rgba(255,255,255,0.9) 1px 2px)"></div><div class="a" style="left:1309px;top:713px;width:1px;height:24px;background:repeating-linear-gradient(to bottom,transparent 0 1px,#b8b8b8 1px 2px)"></div><div class="a" style="left:1309px;top:738px;width:1px;height:24px;background:repeating-linear-gradient(to bottom,transparent 0 1px,#b8b8b8 1px 2px)"></div><div class="a" style="left:1393px;top:363px;width:1px;height:24px;background:repeating-linear-gradient(to bottom,transparent 0 1px,rgba(255,255,255,0.9) 1px 2px)"></div><div class="a" style="left:1393px;top:388px;width:1px;height:24px;background:repeating-linear-gradient(to bottom,transparent 0 1px,#b8b8b8 1px 2px)"></div><div class="a" style="left:1393px;top:413px;width:1px;height:24px;background:repeating-linear-gradient(to bottom,transparent 0 1px,#b8b8b8 1px 2px)"></div><div class="a" style="left:1393px;top:438px;width:1px;height:24px;background:repeating-linear-gradient(to bottom,transparent 0 1px,#b8b8b8 1px 2px)"></div><div class="a" style="left:1393px;top:463px;width:1px;height:24px;background:repeating-linear-gradient(to bottom,transparent 0 1px,#b8b8b8 1px 2px)"></div><div class="a" style="left:1393px;top:488px;width:1px;height:24px;background:repeating-linear-gradient(to bottom,transparent 0 1px,#b8b8b8 1px 2px)"></div><div class="a" style="left:1393px;top:513px;width:1px;height:24px;background:repeating-linear-gradient(to bottom,transparent 0 1px,#b8b8b8 1px 2px)"></div><div class="a" style="left:1393px;top:538px;width:1px;height:24px;background:repeating-linear-gradient(to bottom,transparent 0 1px,#b8b8b8 1px 2px)"></div><div class="a" style="left:1393px;top:563px;width:1px;height:24px;background:repeating-linear-gradient(to bottom,transparent 0 1px,#b8b8b8 1px 2px)"></div><div class="a" style="left:1393px;top:588px;width:1px;height:24px;background:repeating-linear-gradient(to bottom,transparent 0 1px,rgba(255,255,255,0.9) 1px 2px)"></div><div class="a" style="left:1393px;top:613px;width:1px;height:24px;background:repeating-linear-gradient(to bottom,transparent 0 1px,#b8b8b8 1px 2px)"></div><div class="a" style="left:1393px;top:638px;width:1px;height:24px;background:repeating-linear-gradient(to bottom,transparent 0 1px,#b8b8b8 1px 2px)"></div><div class="a" style="left:1393px;top:663px;width:1px;height:24px;background:repeating-linear-gradient(to bottom,transparent 0 1px,#b8b8b8 1px 2px)"></div><div class="a" style="left:1393px;top:688px;width:1px;height:24px;background:repeating-linear-gradient(to bottom,transparent 0 1px,rgba(255,255,255,0.9) 1px 2px)"></div><div class="a" style="left:1393px;top:713px;width:1px;height:24px;background:repeating-linear-gradient(to bottom,transparent 0 1px,#b8b8b8 1px 2px)"></div><div class="a" style="left:1393px;top:738px;width:1px;height:24px;background:repeating-linear-gradient(to bottom,transparent 0 1px,#b8b8b8 1px 2px)"></div><div class="a" style="left:1494px;top:363px;width:1px;height:24px;background:repeating-linear-gradient(to bottom,transparent 0 1px,rgba(255,255,255,0.9) 1px 2px)"></div><div class="a" style="left:1494px;top:388px;width:1px;height:24px;background:repeating-linear-gradient(to bottom,transparent 0 1px,#b8b8b8 1px 2px)"></div><div class="a" style="left:1494px;top:413px;width:1px;height:24px;background:repeating-linear-gradient(to bottom,transparent 0 1px,#b8b8b8 1px 2px)"></div><div class="a" style="left:1494px;top:438px;width:1px;height:24px;background:repeating-linear-gradient(to bottom,transparent 0 1px,#b8b8b8 1px 2px)"></div><div class="a" style="left:1494px;top:463px;width:1px;height:24px;background:repeating-linear-gradient(to bottom,transparent 0 1px,#b8b8b8 1px 2px)"></div><div class="a" style="left:1494px;top:488px;width:1px;height:24px;background:repeating-linear-gradient(to bottom,transparent 0 1px,#b8b8b8 1px 2px)"></div><div class="a" style="left:1494px;top:513px;width:1px;height:24px;background:repeating-linear-gradient(to bottom,transparent 0 1px,#b8b8b8 1px 2px)"></div><div class="a" style="left:1494px;top:538px;width:1px;height:24px;background:repeating-linear-gradient(to bottom,transparent 0 1px,#b8b8b8 1px 2px)"></div><div class="a" style="left:1494px;top:563px;width:1px;height:24px;background:repeating-linear-gradient(to bottom,transparent 0 1px,#b8b8b8 1px 2px)"></div><div class="a" style="left:1494px;top:588px;width:1px;height:24px;background:repeating-linear-gradient(to bottom,transparent 0 1px,rgba(255,255,255,0.9) 1px 2px)"></div><div class="a" style="left:1494px;top:613px;width:1px;height:24px;background:repeating-linear-gradient(to bottom,transparent 0 1px,#b8b8b8 1px 2px)"></div><div class="a" style="left:1494px;top:638px;width:1px;height:24px;background:repeating-linear-gradient(to bottom,transparent 0 1px,#b8b8b8 1px 2px)"></div><div class="a" style="left:1494px;top:663px;width:1px;height:24px;background:repeating-linear-gradient(to bottom,transparent 0 1px,#b8b8b8 1px 2px)"></div><div class="a" style="left:1494px;top:688px;width:1px;height:24px;background:repeating-linear-gradient(to bottom,transparent 0 1px,rgba(255,255,255,0.9) 1px 2px)"></div><div class="a" style="left:1494px;top:713px;width:1px;height:24px;background:repeating-linear-gradient(to bottom,transparent 0 1px,#b8b8b8 1px 2px)"></div><div class="a" style="left:1494px;top:738px;width:1px;height:24px;background:repeating-linear-gradient(to bottom,transparent 0 1px,#b8b8b8 1px 2px)"></div><div class="a" style="left:1595px;top:363px;width:1px;height:24px;background:repeating-linear-gradient(to bottom,transparent 0 1px,rgba(255,255,255,0.9) 1px 2px)"></div><div class="a" style="left:1595px;top:388px;width:1px;height:24px;background:repeating-linear-gradient(to bottom,transparent 0 1px,#b8b8b8 1px 2px)"></div><div class="a" style="left:1595px;top:413px;width:1px;height:24px;background:repeating-linear-gradient(to bottom,transparent 0 1px,#b8b8b8 1px 2px)"></div><div class="a" style="left:1595px;top:438px;width:1px;height:24px;background:repeating-linear-gradient(to bottom,transparent 0 1px,#b8b8b8 1px 2px)"></div><div class="a" style="left:1595px;top:463px;width:1px;height:24px;background:repeating-linear-gradient(to bottom,transparent 0 1px,#b8b8b8 1px 2px)"></div><div class="a" style="left:1595px;top:488px;width:1px;height:24px;background:repeating-linear-gradient(to bottom,transparent 0 1px,#b8b8b8 1px 2px)"></div><div class="a" style="left:1595px;top:513px;width:1px;height:24px;background:repeating-linear-gradient(to bottom,transparent 0 1px,#b8b8b8 1px 2px)"></div><div class="a" style="left:1595px;top:538px;width:1px;height:24px;background:repeating-linear-gradient(to bottom,transparent 0 1px,#b8b8b8 1px 2px)"></div><div class="a" style="left:1595px;top:563px;width:1px;height:24px;background:repeating-linear-gradient(to bottom,transparent 0 1px,#b8b8b8 1px 2px)"></div><div class="a" style="left:1595px;top:588px;width:1px;height:24px;background:repeating-linear-gradient(to bottom,transparent 0 1px,rgba(255,255,255,0.9) 1px 2px)"></div><div class="a" style="left:1595px;top:613px;width:1px;height:24px;background:repeating-linear-gradient(to bottom,transparent 0 1px,#b8b8b8 1px 2px)"></div><div class="a" style="left:1595px;top:638px;width:1px;height:24px;background:repeating-linear-gradient(to bottom,transparent 0 1px,#b8b8b8 1px 2px)"></div><div class="a" style="left:1595px;top:663px;width:1px;height:24px;background:repeating-linear-gradient(to bottom,transparent 0 1px,#b8b8b8 1px 2px)"></div><div class="a" style="left:1595px;top:688px;width:1px;height:24px;background:repeating-linear-gradient(to bottom,transparent 0 1px,rgba(255,255,255,0.9) 1px 2px)"></div><div class="a" style="left:1595px;top:713px;width:1px;height:24px;background:repeating-linear-gradient(to bottom,transparent 0 1px,#b8b8b8 1px 2px)"></div><div class="a" style="left:1595px;top:738px;width:1px;height:24px;background:repeating-linear-gradient(to bottom,transparent 0 1px,#b8b8b8 1px 2px)"></div><div class="a" style="left:1685px;top:363px;width:1px;height:24px;background:repeating-linear-gradient(to bottom,transparent 0 1px,rgba(255,255,255,0.9) 1px 2px)"></div><div class="a" style="left:1685px;top:388px;width:1px;height:24px;background:repeating-linear-gradient(to bottom,transparent 0 1px,#b8b8b8 1px 2px)"></div><div class="a" style="left:1685px;top:413px;width:1px;height:24px;background:repeating-linear-gradient(to bottom,transparent 0 1px,#b8b8b8 1px 2px)"></div><div class="a" style="left:1685px;top:438px;width:1px;height:24px;background:repeating-linear-gradient(to bottom,transparent 0 1px,#b8b8b8 1px 2px)"></div><div class="a" style="left:1685px;top:463px;width:1px;height:24px;background:repeating-linear-gradient(to bottom,transparent 0 1px,#b8b8b8 1px 2px)"></div><div class="a" style="left:1685px;top:488px;width:1px;height:24px;background:repeating-linear-gradient(to bottom,transparent 0 1px,#b8b8b8 1px 2px)"></div><div class="a" style="left:1685px;top:513px;width:1px;height:24px;background:repeating-linear-gradient(to bottom,transparent 0 1px,#b8b8b8 1px 2px)"></div><div class="a" style="left:1685px;top:538px;width:1px;height:24px;background:repeating-linear-gradient(to bottom,transparent 0 1px,#b8b8b8 1px 2px)"></div><div class="a" style="left:1685px;top:563px;width:1px;height:24px;background:repeating-linear-gradient(to bottom,transparent 0 1px,#b8b8b8 1px 2px)"></div><div class="a" style="left:1685px;top:588px;width:1px;height:24px;background:repeating-linear-gradient(to bottom,transparent 0 1px,rgba(255,255,255,0.9) 1px 2px)"></div><div class="a" style="left:1685px;top:613px;width:1px;height:24px;background:repeating-linear-gradient(to bottom,transparent 0 1px,#b8b8b8 1px 2px)"></div><div class="a" style="left:1685px;top:638px;width:1px;height:24px;background:repeating-linear-gradient(to bottom,transparent 0 1px,#b8b8b8 1px 2px)"></div><div class="a" style="left:1685px;top:663px;width:1px;height:24px;background:repeating-linear-gradient(to bottom,transparent 0 1px,#b8b8b8 1px 2px)"></div><div class="a" style="left:1685px;top:688px;width:1px;height:24px;background:repeating-linear-gradient(to bottom,transparent 0 1px,rgba(255,255,255,0.9) 1px 2px)"></div><div class="a" style="left:1685px;top:713px;width:1px;height:24px;background:repeating-linear-gradient(to bottom,transparent 0 1px,#b8b8b8 1px 2px)"></div><div class="a" style="left:1685px;top:738px;width:1px;height:24px;background:repeating-linear-gradient(to bottom,transparent 0 1px,#b8b8b8 1px 2px)"></div><div class="a" style="left:1786px;top:363px;width:1px;height:24px;background:repeating-linear-gradient(to bottom,transparent 0 1px,rgba(255,255,255,0.9) 1px 2px)"></div><div class="a" style="left:1786px;top:388px;width:1px;height:24px;background:repeating-linear-gradient(to bottom,transparent 0 1px,#b8b8b8 1px 2px)"></div><div class="a" style="left:1786px;top:413px;width:1px;height:24px;background:repeating-linear-gradient(to bottom,transparent 0 1px,#b8b8b8 1px 2px)"></div><div class="a" style="left:1786px;top:438px;width:1px;height:24px;background:repeating-linear-gradient(to bottom,transparent 0 1px,#b8b8b8 1px 2px)"></div><div class="a" style="left:1786px;top:463px;width:1px;height:24px;background:repeating-linear-gradient(to bottom,transparent 0 1px,#b8b8b8 1px 2px)"></div><div class="a" style="left:1786px;top:488px;width:1px;height:24px;background:repeating-linear-gradient(to bottom,transparent 0 1px,#b8b8b8 1px 2px)"></div><div class="a" style="left:1786px;top:513px;width:1px;height:24px;background:repeating-linear-gradient(to bottom,transparent 0 1px,#b8b8b8 1px 2px)"></div><div class="a" style="left:1786px;top:538px;width:1px;height:24px;background:repeating-linear-gradient(to bottom,transparent 0 1px,#b8b8b8 1px 2px)"></div><div class="a" style="left:1786px;top:563px;width:1px;height:24px;background:repeating-linear-gradient(to bottom,transparent 0 1px,#b8b8b8 1px 2px)"></div><div class="a" style="left:1786px;top:588px;width:1px;height:24px;background:repeating-linear-gradient(to bottom,transparent 0 1px,rgba(255,255,255,0.9) 1px 2px)"></div><div class="a" style="left:1786px;top:613px;width:1px;height:24px;background:repeating-linear-gradient(to bottom,transparent 0 1px,#b8b8b8 1px 2px)"></div><div class="a" style="left:1786px;top:638px;width:1px;height:24px;background:repeating-linear-gradient(to bottom,transparent 0 1px,#b8b8b8 1px 2px)"></div><div class="a" style="left:1786px;top:663px;width:1px;height:24px;background:repeating-linear-gradient(to bottom,transparent 0 1px,#b8b8b8 1px 2px)"></div><div class="a" style="left:1786px;top:688px;width:1px;height:24px;background:repeating-linear-gradient(to bottom,transparent 0 1px,rgba(255,255,255,0.9) 1px 2px)"></div><div class="a" style="left:1786px;top:713px;width:1px;height:24px;background:repeating-linear-gradient(to bottom,transparent 0 1px,#b8b8b8 1px 2px)"></div><div class="a" style="left:1786px;top:738px;width:1px;height:24px;background:repeating-linear-gradient(to bottom,transparent 0 1px,#b8b8b8 1px 2px)"></div><div class="a" style="left:1889px;top:363px;width:1px;height:24px;background:repeating-linear-gradient(to bottom,transparent 0 1px,rgba(255,255,255,0.9) 1px 2px)"></div><div class="a" style="left:1889px;top:388px;width:1px;height:24px;background:repeating-linear-gradient(to bottom,transparent 0 1px,#b8b8b8 1px 2px)"></div><div class="a" style="left:1889px;top:413px;width:1px;height:24px;background:repeating-linear-gradient(to bottom,transparent 0 1px,#b8b8b8 1px 2px)"></div><div class="a" style="left:1889px;top:438px;width:1px;height:24px;background:repeating-linear-gradient(to bottom,transparent 0 1px,#b8b8b8 1px 2px)"></div><div class="a" style="left:1889px;top:463px;width:1px;height:24px;background:repeating-linear-gradient(to bottom,transparent 0 1px,#b8b8b8 1px 2px)"></div><div class="a" style="left:1889px;top:488px;width:1px;height:24px;background:repeating-linear-gradient(to bottom,transparent 0 1px,#b8b8b8 1px 2px)"></div><div class="a" style="left:1889px;top:513px;width:1px;height:24px;background:repeating-linear-gradient(to bottom,transparent 0 1px,#b8b8b8 1px 2px)"></div><div class="a" style="left:1889px;top:538px;width:1px;height:24px;background:repeating-linear-gradient(to bottom,transparent 0 1px,#b8b8b8 1px 2px)"></div><div class="a" style="left:1889px;top:563px;width:1px;height:24px;background:repeating-linear-gradient(to bottom,transparent 0 1px,#b8b8b8 1px 2px)"></div><div class="a" style="left:1889px;top:588px;width:1px;height:24px;background:repeating-linear-gradient(to bottom,transparent 0 1px,rgba(255,255,255,0.9) 1px 2px)"></div><div class="a" style="left:1889px;top:613px;width:1px;height:24px;background:repeating-linear-gradient(to bottom,transparent 0 1px,#b8b8b8 1px 2px)"></div><div class="a" style="left:1889px;top:638px;width:1px;height:24px;background:repeating-linear-gradient(to bottom,transparent 0 1px,#b8b8b8 1px 2px)"></div><div class="a" style="left:1889px;top:663px;width:1px;height:24px;background:repeating-linear-gradient(to bottom,transparent 0 1px,#b8b8b8 1px 2px)"></div><div class="a" style="left:1889px;top:688px;width:1px;height:24px;background:repeating-linear-gradient(to bottom,transparent 0 1px,rgba(255,255,255,0.9) 1px 2px)"></div><div class="a" style="left:1889px;top:713px;width:1px;height:24px;background:repeating-linear-gradient(to bottom,transparent 0 1px,#b8b8b8 1px 2px)"></div><div class="a" style="left:1889px;top:738px;width:1px;height:24px;background:repeating-linear-gradient(to bottom,transparent 0 1px,#b8b8b8 1px 2px)"></div><svg class="a" style="left:206px;top:445px" width="6" height="10" viewBox="0 0 6 10"><path d="M0 0 L5.5 5 L0 10Z" fill="#000"/></svg><div class="t" style="left:211px;top:442.5px;font-family:'Liberation Serif';font-size:16px;font-weight:700;color:#000">&amp;</div><div class="a" style="left:720px;top:438px;width:1200px;height:25px;border:1px solid #3b7ff0"></div><div class="a" style="left:193px;top:763px;width:1px;height:140px;background:#dddddd"></div><div class="a" style="left:194px;top:763px;width:1721px;height:140px;background:#555555"></div><div class="a" style="left:720px;top:888px;width:1195px;height:1px;background:#ffffff"></div><div class="a" style="left:720px;top:889px;width:1195px;height:14px;background:#f0f0f0"></div><div class="a" style="left:193px;top:903px;width:1722px;height:1px;background:#e0e0e0"></div><div class="a" style="left:737px;top:890px;width:100px;height:13px;background:#c1c1c1"></div><svg class="a" style="left:726px;top:893px" width="5" height="8" viewBox="0 0 5 8"><path d="M4.5 0 V8 L0 4Z" fill="#9aa2a6"/></svg><svg class="a" style="left:1905px;top:892px" width="5" height="8" viewBox="0 0 5 8"><path d="M0 0 V8 L4.5 4Z" fill="#333"/></svg><div class="a" style="left:195px;top:909px;width:225px;height:32px;background:#f0f0f0;border:1px solid #b9b9b9"></div><div class="t" style="left:206px;top:918.15px;font-size:14px;color:#222;font-weight:400;">Deposit Required</div><div class="t" style="left:323px;top:918.15px;font-size:14px;color:#222;font-weight:400;">$1,708.20</div><div class="a" style="left:389px;top:917px;width:19px;height:17px;background:#fff;border:1px solid #c8c8c8;border-radius:3px"></div><div class="t" style="left:389px;width:19px;text-align:center;top:920px;font-size:11px;color:#333">..</div><div class="a" style="left:1381px;top:909px;width:151px;height:32px;background:#f0f0f0;border:1px solid #b9b9b9"></div><div class="t" style="left:1392px;top:918.15px;font-size:14px;color:#222;font-weight:400;">Sub Total</div><div class="t" style="left:1459px;top:918.15px;font-size:14px;color:#222;font-weight:400;">$5,272.21</div><div class="a" style="left:1536px;top:909px;width:103px;height:32px;background:#f0f0f0;border:1px solid #b9b9b9"></div><div class="t" style="left:1548px;top:918.15px;font-size:14px;color:#222;font-weight:400;">Tax</div><div class="t" style="left:1578px;top:918.15px;font-size:14px;color:#222;font-weight:400;">$421.78</div><div class="a" style="left:1643px;top:909px;width:144px;height:32px;background:#f0f0f0;border:1px solid #b9b9b9"></div><div class="t" style="left:1654px;top:918.15px;font-size:14px;color:#222;font-weight:400;">Shipping</div><div class="t" style="left:1718px;top:918.15px;font-size:14px;color:#222;font-weight:400;">$0.00</div><div class="a" style="left:1757px;top:917px;width:19px;height:17px;background:#fff;border:1px solid #c8c8c8;border-radius:3px"></div><div class="t" style="left:1757px;width:19px;text-align:center;top:920px;font-size:11px;color:#333">..</div><div class="a" style="left:1791px;top:909px;width:123px;height:32px;background:#f0f0f0;border:1px solid #b9b9b9"></div><div class="t" style="left:1802px;top:918.15px;font-size:14px;color:#222;font-weight:400;">Total</div><div class="t" style="left:1841px;top:918.15px;font-size:14px;color:#222;font-weight:400;">$5,693.99</div><div class="a" style="left:1734px;top:946px;width:180px;height:32px;background:#f0f0f0;border:1px solid #b9b9b9"></div><div class="t" style="left:1746px;top:955.15px;font-size:14px;color:#222;font-weight:400;">Recurring Monthly</div><div class="t" style="left:1868px;top:955.15px;font-size:14px;color:#222;font-weight:400;">$0.00</div><div class="a" style="left:193px;top:984px;width:1722px;height:22px;background:#000"></div><div class="t" style="left:217px;top:988.15px;font-size:14px;color:#5aabf5;font-weight:400;">Product/Service | Taxable</div><div class="t" style="left:1757px;top:988.15px;font-size:14px;color:#5aabf5;font-weight:400;">Sel</div><div class="t" style="left:1785px;top:988.15px;font-size:14px;color:#5aabf5;font-weight:400;">1</div><div class="t" style="left:1818px;top:988.15px;font-size:14px;color:#5aabf5;font-weight:400;">Ln</div><div class="t" style="left:1839px;top:988.15px;font-size:14px;color:#5aabf5;font-weight:400;">4/16</div><svg class="a" style="left:1892px;top:987px" width="17" height="16" viewBox="0 0 17 16"><rect x="0" y="0" width="1" height="3" fill="#0a6a0a"/><rect x="2" y="0" width="2" height="3" fill="#08901a"/><rect x="5" y="0" width="2" height="3" fill="#08901a"/><rect x="8" y="0" width="2" height="3" fill="#00d000"/><rect x="0" y="4" width="1" height="3" fill="#0a6a0a"/><rect x="2" y="4" width="2" height="3" fill="#08901a"/><rect x="5" y="4" width="2" height="3" fill="#08901a"/><rect x="8" y="4" width="2" height="3" fill="#00d000"/><rect x="0" y="8" width="1" height="3" fill="#0a6a0a"/><rect x="2" y="8" width="2" height="3" fill="#08901a"/><rect x="5" y="8" width="2" height="3" fill="#08901a"/><rect x="8" y="8" width="2" height="3" fill="#00d000"/><rect x="0" y="12" width="1" height="3" fill="#0a6a0a"/><rect x="2" y="12" width="2" height="3" fill="#08901a"/><rect x="5" y="12" width="2" height="3" fill="#08901a"/><rect x="8" y="12" width="2" height="3" fill="#00d000"/><rect x="11" y="0" width="5" height="15" fill="#00f000"/></svg><svg class="a" style="left:1908px;top:998px" width="7" height="9" viewBox="0 0 7 9"><path d="M0 9 L7 2 M4 9 L7 6" stroke="#bbb" stroke-width="1" stroke-dasharray="1 1"/></svg></body></html>
